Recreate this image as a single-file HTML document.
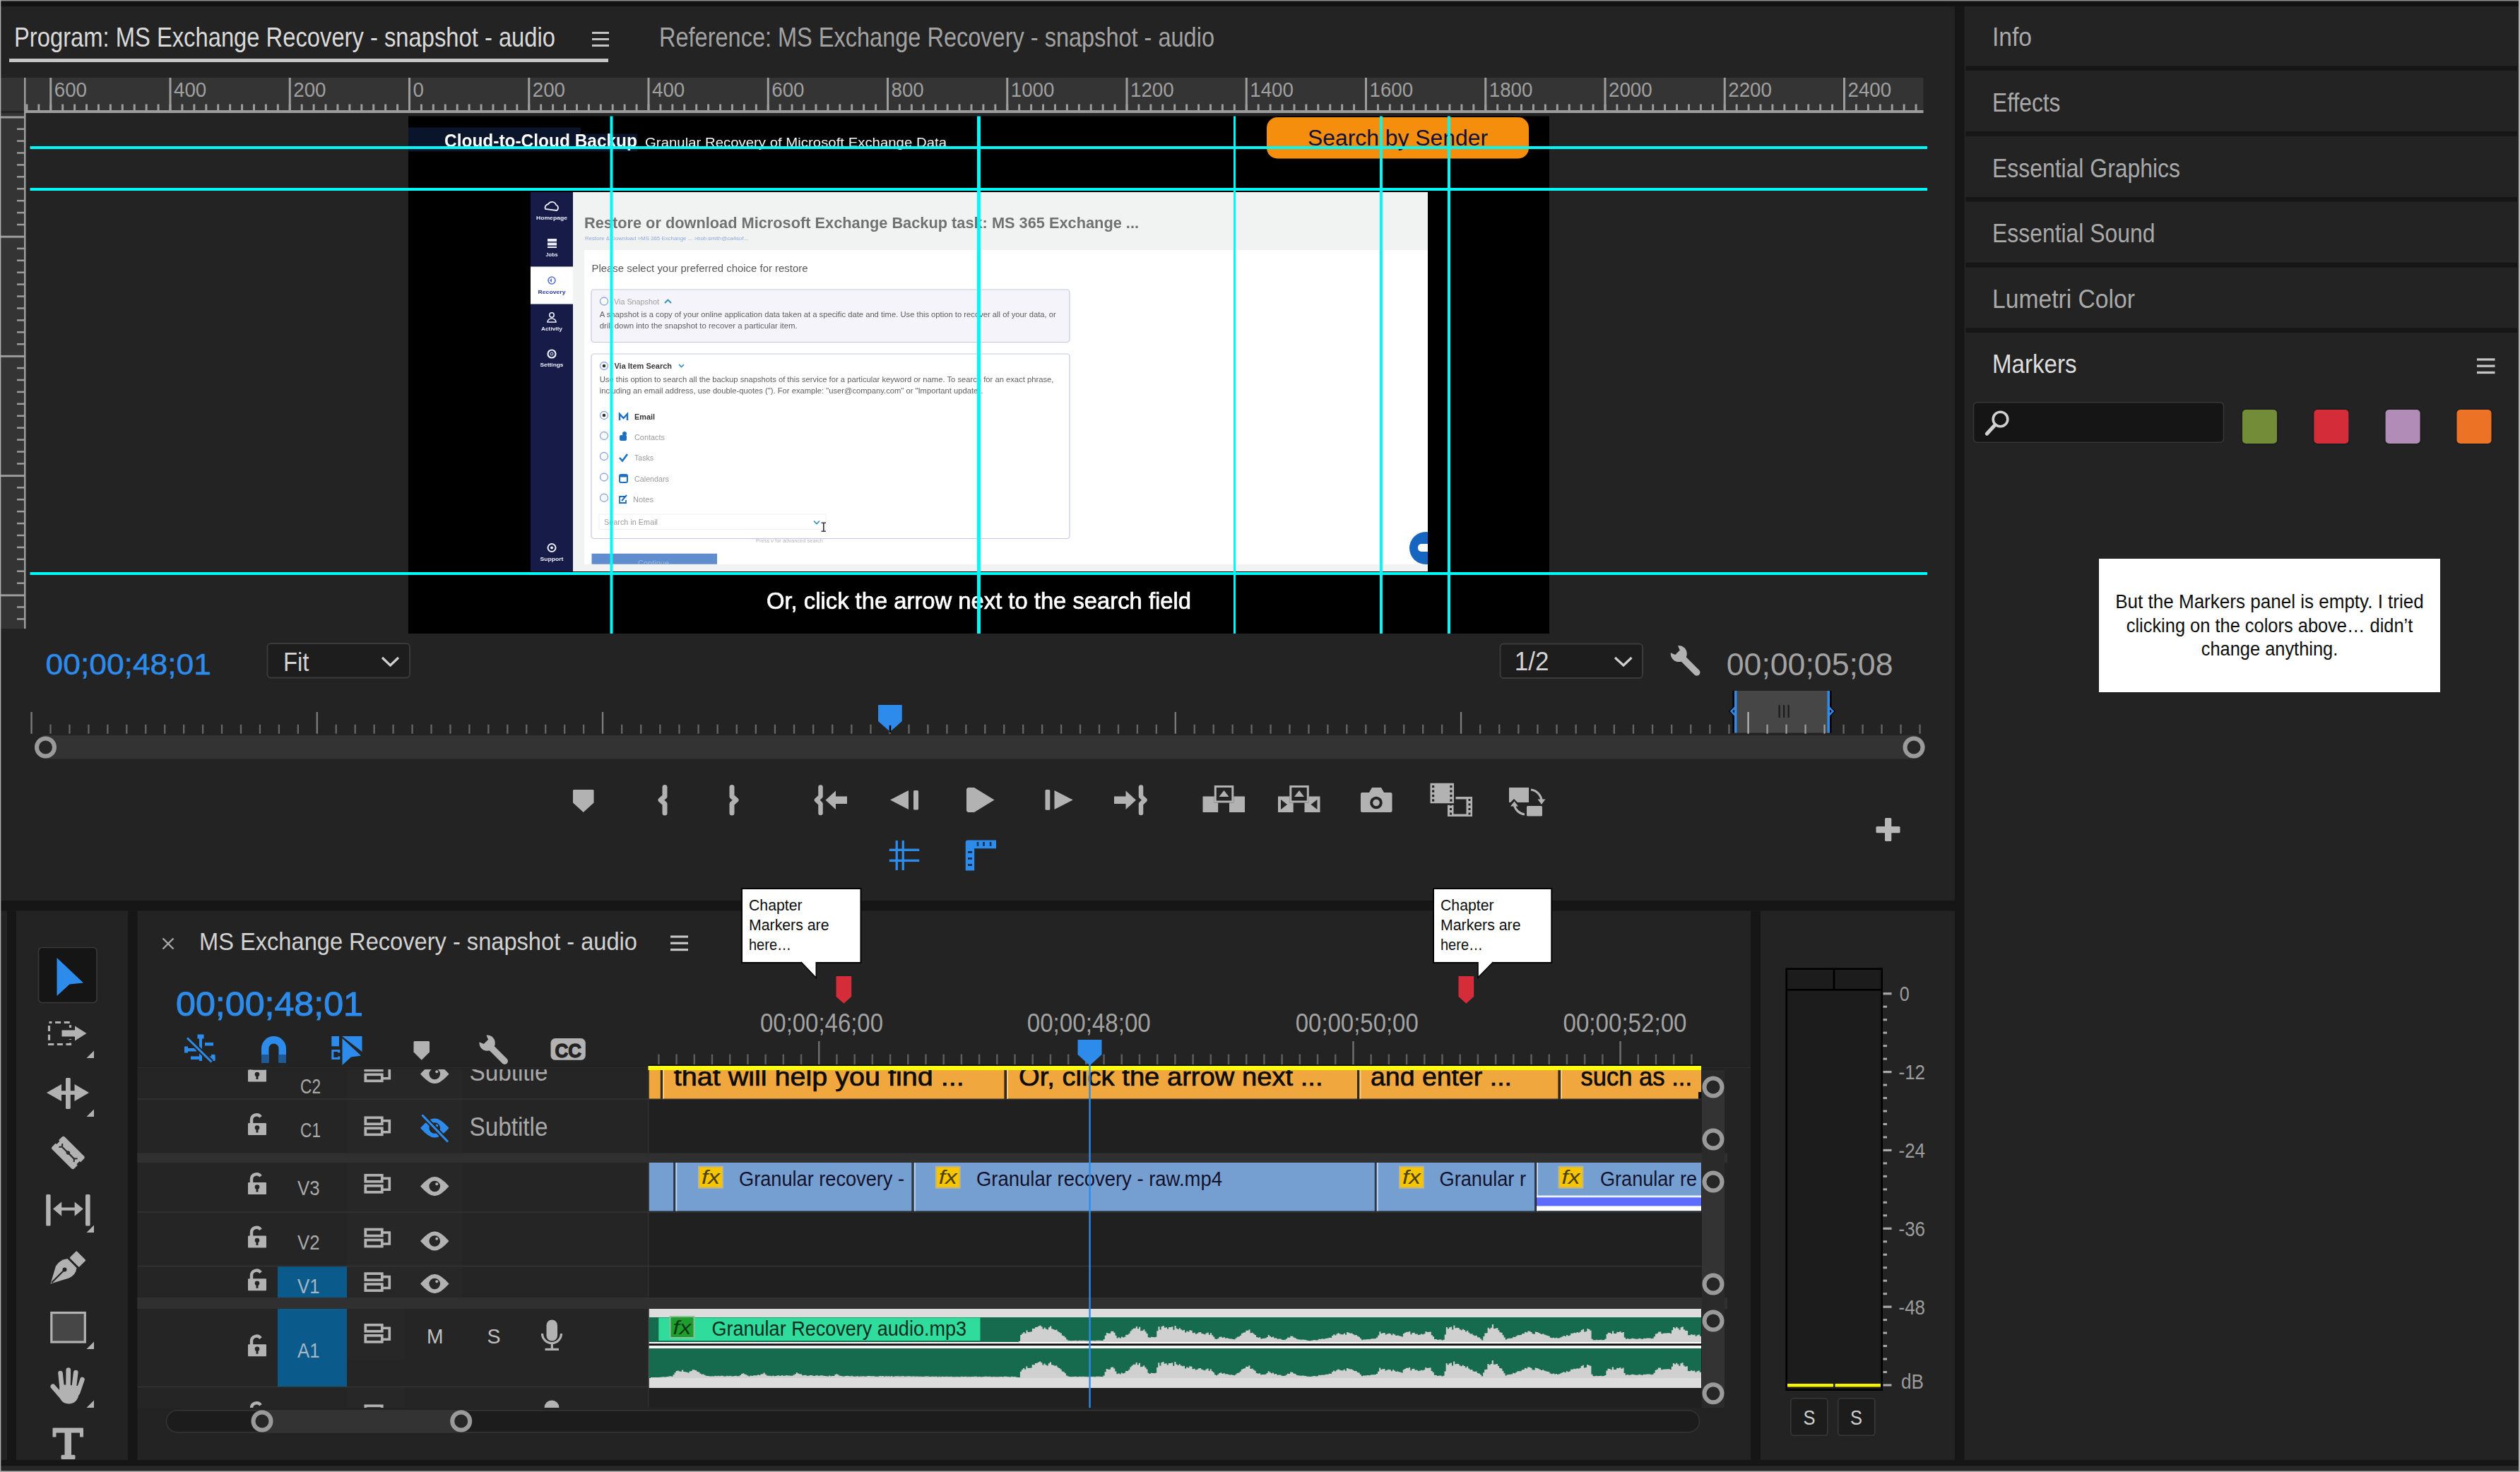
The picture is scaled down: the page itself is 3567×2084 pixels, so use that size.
<!DOCTYPE html>
<html lang="en"><head><meta charset="utf-8"><title>Adobe Premiere Pro - Program monitor, timeline and Markers panel</title>
<style>
html,body{margin:0;padding:0;background:#232323;overflow:hidden}
body{width:3567px;height:2084px;font-family:"Liberation Sans",sans-serif}
svg{display:block;position:absolute;left:0;top:0}
svg text{font-family:"Liberation Sans",sans-serif;white-space:pre}
</style></head>
<body>
<main aria-label="Premiere Pro workspace">
<svg width="3567" height="2084" viewBox="0 0 3567 2084" shape-rendering="auto">
<rect x="0" y="0" width="3567" height="2084" fill="#232323" />
<rect x="0" y="0" width="3567" height="9" fill="#131313" />
<rect x="0" y="0" width="3567" height="1.5" fill="#8c8c8c" />
<text x="20" y="66" font-size="39" fill="#dadada" textLength="766" lengthAdjust="spacingAndGlyphs" >Program: MS Exchange Recovery - snapshot - audio</text>
<rect x="13" y="83" width="848" height="5" fill="#c6c6c6" />
<rect x="838" y="45" width="24" height="3" fill="#c4c4c4" />
<rect x="838" y="54" width="24" height="3" fill="#c4c4c4" />
<rect x="838" y="63" width="24" height="3" fill="#c4c4c4" />
<text x="933" y="66" font-size="39" fill="#a2a2a2" textLength="786" lengthAdjust="spacingAndGlyphs" >Reference: MS Exchange Recovery - snapshot - audio</text>
<rect x="1" y="110" width="2721.5" height="47" fill="#343434" />
<rect x="36.4" y="147.5" width="3" height="9" fill="#9c9c9c" />
<rect x="53.325" y="147.5" width="3" height="9" fill="#9c9c9c" />
<rect x="70.25" y="147.5" width="3" height="9" fill="#9c9c9c" />
<rect x="87.175" y="147.5" width="3" height="9" fill="#9c9c9c" />
<rect x="104.1" y="147.5" width="3" height="9" fill="#9c9c9c" />
<rect x="121.025" y="147.5" width="3" height="9" fill="#9c9c9c" />
<rect x="137.95" y="147.5" width="3" height="9" fill="#9c9c9c" />
<rect x="154.875" y="147.5" width="3" height="9" fill="#9c9c9c" />
<rect x="171.8" y="147.5" width="3" height="9" fill="#9c9c9c" />
<rect x="188.725" y="147.5" width="3" height="9" fill="#9c9c9c" />
<rect x="205.65" y="147.5" width="3" height="9" fill="#9c9c9c" />
<rect x="222.575" y="147.5" width="3" height="9" fill="#9c9c9c" />
<rect x="239.5" y="147.5" width="3" height="9" fill="#9c9c9c" />
<rect x="256.425" y="147.5" width="3" height="9" fill="#9c9c9c" />
<rect x="273.35" y="147.5" width="3" height="9" fill="#9c9c9c" />
<rect x="290.275" y="147.5" width="3" height="9" fill="#9c9c9c" />
<rect x="307.2" y="147.5" width="3" height="9" fill="#9c9c9c" />
<rect x="324.125" y="147.5" width="3" height="9" fill="#9c9c9c" />
<rect x="341.05" y="147.5" width="3" height="9" fill="#9c9c9c" />
<rect x="357.975" y="147.5" width="3" height="9" fill="#9c9c9c" />
<rect x="374.9" y="147.5" width="3" height="9" fill="#9c9c9c" />
<rect x="391.825" y="147.5" width="3" height="9" fill="#9c9c9c" />
<rect x="408.75" y="147.5" width="3" height="9" fill="#9c9c9c" />
<rect x="425.675" y="147.5" width="3" height="9" fill="#9c9c9c" />
<rect x="442.6" y="147.5" width="3" height="9" fill="#9c9c9c" />
<rect x="459.525" y="147.5" width="3" height="9" fill="#9c9c9c" />
<rect x="476.45" y="147.5" width="3" height="9" fill="#9c9c9c" />
<rect x="493.375" y="147.5" width="3" height="9" fill="#9c9c9c" />
<rect x="510.3" y="147.5" width="3" height="9" fill="#9c9c9c" />
<rect x="527.225" y="147.5" width="3" height="9" fill="#9c9c9c" />
<rect x="544.15" y="147.5" width="3" height="9" fill="#9c9c9c" />
<rect x="561.075" y="147.5" width="3" height="9" fill="#9c9c9c" />
<rect x="578" y="147.5" width="3" height="9" fill="#9c9c9c" />
<rect x="594.925" y="147.5" width="3" height="9" fill="#9c9c9c" />
<rect x="611.85" y="147.5" width="3" height="9" fill="#9c9c9c" />
<rect x="628.775" y="147.5" width="3" height="9" fill="#9c9c9c" />
<rect x="645.7" y="147.5" width="3" height="9" fill="#9c9c9c" />
<rect x="662.625" y="147.5" width="3" height="9" fill="#9c9c9c" />
<rect x="679.55" y="147.5" width="3" height="9" fill="#9c9c9c" />
<rect x="696.475" y="147.5" width="3" height="9" fill="#9c9c9c" />
<rect x="713.4" y="147.5" width="3" height="9" fill="#9c9c9c" />
<rect x="730.325" y="147.5" width="3" height="9" fill="#9c9c9c" />
<rect x="747.25" y="147.5" width="3" height="9" fill="#9c9c9c" />
<rect x="764.175" y="147.5" width="3" height="9" fill="#9c9c9c" />
<rect x="781.1" y="147.5" width="3" height="9" fill="#9c9c9c" />
<rect x="798.025" y="147.5" width="3" height="9" fill="#9c9c9c" />
<rect x="814.95" y="147.5" width="3" height="9" fill="#9c9c9c" />
<rect x="831.875" y="147.5" width="3" height="9" fill="#9c9c9c" />
<rect x="848.8" y="147.5" width="3" height="9" fill="#9c9c9c" />
<rect x="865.725" y="147.5" width="3" height="9" fill="#9c9c9c" />
<rect x="882.65" y="147.5" width="3" height="9" fill="#9c9c9c" />
<rect x="899.575" y="147.5" width="3" height="9" fill="#9c9c9c" />
<rect x="916.5" y="147.5" width="3" height="9" fill="#9c9c9c" />
<rect x="933.425" y="147.5" width="3" height="9" fill="#9c9c9c" />
<rect x="950.35" y="147.5" width="3" height="9" fill="#9c9c9c" />
<rect x="967.275" y="147.5" width="3" height="9" fill="#9c9c9c" />
<rect x="984.2" y="147.5" width="3" height="9" fill="#9c9c9c" />
<rect x="1001.12" y="147.5" width="3" height="9" fill="#9c9c9c" />
<rect x="1018.05" y="147.5" width="3" height="9" fill="#9c9c9c" />
<rect x="1034.97" y="147.5" width="3" height="9" fill="#9c9c9c" />
<rect x="1051.9" y="147.5" width="3" height="9" fill="#9c9c9c" />
<rect x="1068.82" y="147.5" width="3" height="9" fill="#9c9c9c" />
<rect x="1085.75" y="147.5" width="3" height="9" fill="#9c9c9c" />
<rect x="1102.67" y="147.5" width="3" height="9" fill="#9c9c9c" />
<rect x="1119.6" y="147.5" width="3" height="9" fill="#9c9c9c" />
<rect x="1136.52" y="147.5" width="3" height="9" fill="#9c9c9c" />
<rect x="1153.45" y="147.5" width="3" height="9" fill="#9c9c9c" />
<rect x="1170.37" y="147.5" width="3" height="9" fill="#9c9c9c" />
<rect x="1187.3" y="147.5" width="3" height="9" fill="#9c9c9c" />
<rect x="1204.22" y="147.5" width="3" height="9" fill="#9c9c9c" />
<rect x="1221.15" y="147.5" width="3" height="9" fill="#9c9c9c" />
<rect x="1238.07" y="147.5" width="3" height="9" fill="#9c9c9c" />
<rect x="1255" y="147.5" width="3" height="9" fill="#9c9c9c" />
<rect x="1271.92" y="147.5" width="3" height="9" fill="#9c9c9c" />
<rect x="1288.85" y="147.5" width="3" height="9" fill="#9c9c9c" />
<rect x="1305.77" y="147.5" width="3" height="9" fill="#9c9c9c" />
<rect x="1322.7" y="147.5" width="3" height="9" fill="#9c9c9c" />
<rect x="1339.62" y="147.5" width="3" height="9" fill="#9c9c9c" />
<rect x="1356.55" y="147.5" width="3" height="9" fill="#9c9c9c" />
<rect x="1373.47" y="147.5" width="3" height="9" fill="#9c9c9c" />
<rect x="1390.4" y="147.5" width="3" height="9" fill="#9c9c9c" />
<rect x="1407.32" y="147.5" width="3" height="9" fill="#9c9c9c" />
<rect x="1424.25" y="147.5" width="3" height="9" fill="#9c9c9c" />
<rect x="1441.17" y="147.5" width="3" height="9" fill="#9c9c9c" />
<rect x="1458.1" y="147.5" width="3" height="9" fill="#9c9c9c" />
<rect x="1475.02" y="147.5" width="3" height="9" fill="#9c9c9c" />
<rect x="1491.95" y="147.5" width="3" height="9" fill="#9c9c9c" />
<rect x="1508.87" y="147.5" width="3" height="9" fill="#9c9c9c" />
<rect x="1525.8" y="147.5" width="3" height="9" fill="#9c9c9c" />
<rect x="1542.72" y="147.5" width="3" height="9" fill="#9c9c9c" />
<rect x="1559.65" y="147.5" width="3" height="9" fill="#9c9c9c" />
<rect x="1576.57" y="147.5" width="3" height="9" fill="#9c9c9c" />
<rect x="1593.5" y="147.5" width="3" height="9" fill="#9c9c9c" />
<rect x="1610.42" y="147.5" width="3" height="9" fill="#9c9c9c" />
<rect x="1627.35" y="147.5" width="3" height="9" fill="#9c9c9c" />
<rect x="1644.27" y="147.5" width="3" height="9" fill="#9c9c9c" />
<rect x="1661.2" y="147.5" width="3" height="9" fill="#9c9c9c" />
<rect x="1678.12" y="147.5" width="3" height="9" fill="#9c9c9c" />
<rect x="1695.05" y="147.5" width="3" height="9" fill="#9c9c9c" />
<rect x="1711.97" y="147.5" width="3" height="9" fill="#9c9c9c" />
<rect x="1728.9" y="147.5" width="3" height="9" fill="#9c9c9c" />
<rect x="1745.82" y="147.5" width="3" height="9" fill="#9c9c9c" />
<rect x="1762.75" y="147.5" width="3" height="9" fill="#9c9c9c" />
<rect x="1779.67" y="147.5" width="3" height="9" fill="#9c9c9c" />
<rect x="1796.6" y="147.5" width="3" height="9" fill="#9c9c9c" />
<rect x="1813.52" y="147.5" width="3" height="9" fill="#9c9c9c" />
<rect x="1830.45" y="147.5" width="3" height="9" fill="#9c9c9c" />
<rect x="1847.37" y="147.5" width="3" height="9" fill="#9c9c9c" />
<rect x="1864.3" y="147.5" width="3" height="9" fill="#9c9c9c" />
<rect x="1881.22" y="147.5" width="3" height="9" fill="#9c9c9c" />
<rect x="1898.15" y="147.5" width="3" height="9" fill="#9c9c9c" />
<rect x="1915.07" y="147.5" width="3" height="9" fill="#9c9c9c" />
<rect x="1932" y="147.5" width="3" height="9" fill="#9c9c9c" />
<rect x="1948.92" y="147.5" width="3" height="9" fill="#9c9c9c" />
<rect x="1965.85" y="147.5" width="3" height="9" fill="#9c9c9c" />
<rect x="1982.77" y="147.5" width="3" height="9" fill="#9c9c9c" />
<rect x="1999.7" y="147.5" width="3" height="9" fill="#9c9c9c" />
<rect x="2016.62" y="147.5" width="3" height="9" fill="#9c9c9c" />
<rect x="2033.55" y="147.5" width="3" height="9" fill="#9c9c9c" />
<rect x="2050.47" y="147.5" width="3" height="9" fill="#9c9c9c" />
<rect x="2067.4" y="147.5" width="3" height="9" fill="#9c9c9c" />
<rect x="2084.32" y="147.5" width="3" height="9" fill="#9c9c9c" />
<rect x="2101.25" y="147.5" width="3" height="9" fill="#9c9c9c" />
<rect x="2118.17" y="147.5" width="3" height="9" fill="#9c9c9c" />
<rect x="2135.1" y="147.5" width="3" height="9" fill="#9c9c9c" />
<rect x="2152.02" y="147.5" width="3" height="9" fill="#9c9c9c" />
<rect x="2168.95" y="147.5" width="3" height="9" fill="#9c9c9c" />
<rect x="2185.87" y="147.5" width="3" height="9" fill="#9c9c9c" />
<rect x="2202.8" y="147.5" width="3" height="9" fill="#9c9c9c" />
<rect x="2219.72" y="147.5" width="3" height="9" fill="#9c9c9c" />
<rect x="2236.65" y="147.5" width="3" height="9" fill="#9c9c9c" />
<rect x="2253.57" y="147.5" width="3" height="9" fill="#9c9c9c" />
<rect x="2270.5" y="147.5" width="3" height="9" fill="#9c9c9c" />
<rect x="2287.42" y="147.5" width="3" height="9" fill="#9c9c9c" />
<rect x="2304.35" y="147.5" width="3" height="9" fill="#9c9c9c" />
<rect x="2321.27" y="147.5" width="3" height="9" fill="#9c9c9c" />
<rect x="2338.2" y="147.5" width="3" height="9" fill="#9c9c9c" />
<rect x="2355.12" y="147.5" width="3" height="9" fill="#9c9c9c" />
<rect x="2372.05" y="147.5" width="3" height="9" fill="#9c9c9c" />
<rect x="2388.97" y="147.5" width="3" height="9" fill="#9c9c9c" />
<rect x="2405.9" y="147.5" width="3" height="9" fill="#9c9c9c" />
<rect x="2422.83" y="147.5" width="3" height="9" fill="#9c9c9c" />
<rect x="2439.75" y="147.5" width="3" height="9" fill="#9c9c9c" />
<rect x="2456.68" y="147.5" width="3" height="9" fill="#9c9c9c" />
<rect x="2473.6" y="147.5" width="3" height="9" fill="#9c9c9c" />
<rect x="2490.53" y="147.5" width="3" height="9" fill="#9c9c9c" />
<rect x="2507.45" y="147.5" width="3" height="9" fill="#9c9c9c" />
<rect x="2524.38" y="147.5" width="3" height="9" fill="#9c9c9c" />
<rect x="2541.3" y="147.5" width="3" height="9" fill="#9c9c9c" />
<rect x="2558.23" y="147.5" width="3" height="9" fill="#9c9c9c" />
<rect x="2575.15" y="147.5" width="3" height="9" fill="#9c9c9c" />
<rect x="2592.08" y="147.5" width="3" height="9" fill="#9c9c9c" />
<rect x="2609" y="147.5" width="3" height="9" fill="#9c9c9c" />
<rect x="2625.93" y="147.5" width="3" height="9" fill="#9c9c9c" />
<rect x="2642.85" y="147.5" width="3" height="9" fill="#9c9c9c" />
<rect x="2659.78" y="147.5" width="3" height="9" fill="#9c9c9c" />
<rect x="2676.7" y="147.5" width="3" height="9" fill="#9c9c9c" />
<rect x="2693.63" y="147.5" width="3" height="9" fill="#9c9c9c" />
<rect x="2710.55" y="147.5" width="3" height="9" fill="#9c9c9c" />
<rect x="70.25" y="110" width="3" height="47" fill="#9c9c9c" />
<text x="76.75" y="136.5" font-size="29" fill="#a0a0a0" textLength="46.2" lengthAdjust="spacingAndGlyphs" >600</text>
<rect x="239.5" y="110" width="3" height="47" fill="#9c9c9c" />
<text x="246" y="136.5" font-size="29" fill="#a0a0a0" textLength="46.2" lengthAdjust="spacingAndGlyphs" >400</text>
<rect x="408.75" y="110" width="3" height="47" fill="#9c9c9c" />
<text x="415.25" y="136.5" font-size="29" fill="#a0a0a0" textLength="46.2" lengthAdjust="spacingAndGlyphs" >200</text>
<rect x="578" y="110" width="3" height="47" fill="#9c9c9c" />
<text x="584.5" y="136.5" font-size="29" fill="#a0a0a0" textLength="15.4" lengthAdjust="spacingAndGlyphs" >0</text>
<rect x="747.25" y="110" width="3" height="47" fill="#9c9c9c" />
<text x="753.75" y="136.5" font-size="29" fill="#a0a0a0" textLength="46.2" lengthAdjust="spacingAndGlyphs" >200</text>
<rect x="916.5" y="110" width="3" height="47" fill="#9c9c9c" />
<text x="923" y="136.5" font-size="29" fill="#a0a0a0" textLength="46.2" lengthAdjust="spacingAndGlyphs" >400</text>
<rect x="1085.75" y="110" width="3" height="47" fill="#9c9c9c" />
<text x="1092.25" y="136.5" font-size="29" fill="#a0a0a0" textLength="46.2" lengthAdjust="spacingAndGlyphs" >600</text>
<rect x="1255" y="110" width="3" height="47" fill="#9c9c9c" />
<text x="1261.5" y="136.5" font-size="29" fill="#a0a0a0" textLength="46.2" lengthAdjust="spacingAndGlyphs" >800</text>
<rect x="1424.25" y="110" width="3" height="47" fill="#9c9c9c" />
<text x="1430.75" y="136.5" font-size="29" fill="#a0a0a0" textLength="61.6" lengthAdjust="spacingAndGlyphs" >1000</text>
<rect x="1593.5" y="110" width="3" height="47" fill="#9c9c9c" />
<text x="1600" y="136.5" font-size="29" fill="#a0a0a0" textLength="61.6" lengthAdjust="spacingAndGlyphs" >1200</text>
<rect x="1762.75" y="110" width="3" height="47" fill="#9c9c9c" />
<text x="1769.25" y="136.5" font-size="29" fill="#a0a0a0" textLength="61.6" lengthAdjust="spacingAndGlyphs" >1400</text>
<rect x="1932" y="110" width="3" height="47" fill="#9c9c9c" />
<text x="1938.5" y="136.5" font-size="29" fill="#a0a0a0" textLength="61.6" lengthAdjust="spacingAndGlyphs" >1600</text>
<rect x="2101.25" y="110" width="3" height="47" fill="#9c9c9c" />
<text x="2107.75" y="136.5" font-size="29" fill="#a0a0a0" textLength="61.6" lengthAdjust="spacingAndGlyphs" >1800</text>
<rect x="2270.5" y="110" width="3" height="47" fill="#9c9c9c" />
<text x="2277" y="136.5" font-size="29" fill="#a0a0a0" textLength="61.6" lengthAdjust="spacingAndGlyphs" >2000</text>
<rect x="2439.75" y="110" width="3" height="47" fill="#9c9c9c" />
<text x="2446.25" y="136.5" font-size="29" fill="#a0a0a0" textLength="61.6" lengthAdjust="spacingAndGlyphs" >2200</text>
<rect x="2609" y="110" width="3" height="47" fill="#9c9c9c" />
<text x="2615.5" y="136.5" font-size="29" fill="#a0a0a0" textLength="61.6" lengthAdjust="spacingAndGlyphs" >2400</text>
<rect x="35" y="156" width="2687.5" height="4" fill="#9c9c9c" />
<rect x="34" y="110" width="2.5" height="780" fill="#9c9c9c" />
<rect x="1" y="160" width="33" height="730" fill="#343434" />
<rect x="1" y="164.5" width="34" height="3" fill="#9c9c9c" />
<rect x="24" y="181.42" width="10" height="2.5" fill="#9c9c9c" />
<rect x="24" y="198.34" width="10" height="2.5" fill="#9c9c9c" />
<rect x="24" y="215.26" width="10" height="2.5" fill="#9c9c9c" />
<rect x="24" y="232.18" width="10" height="2.5" fill="#9c9c9c" />
<rect x="24" y="249.1" width="10" height="2.5" fill="#9c9c9c" />
<rect x="24" y="266.02" width="10" height="2.5" fill="#9c9c9c" />
<rect x="24" y="282.94" width="10" height="2.5" fill="#9c9c9c" />
<rect x="24" y="299.86" width="10" height="2.5" fill="#9c9c9c" />
<rect x="24" y="316.78" width="10" height="2.5" fill="#9c9c9c" />
<rect x="1" y="333.7" width="34" height="3" fill="#9c9c9c" />
<rect x="24" y="350.62" width="10" height="2.5" fill="#9c9c9c" />
<rect x="24" y="367.54" width="10" height="2.5" fill="#9c9c9c" />
<rect x="24" y="384.46" width="10" height="2.5" fill="#9c9c9c" />
<rect x="24" y="401.38" width="10" height="2.5" fill="#9c9c9c" />
<rect x="24" y="418.3" width="10" height="2.5" fill="#9c9c9c" />
<rect x="24" y="435.22" width="10" height="2.5" fill="#9c9c9c" />
<rect x="24" y="452.14" width="10" height="2.5" fill="#9c9c9c" />
<rect x="24" y="469.06" width="10" height="2.5" fill="#9c9c9c" />
<rect x="24" y="485.98" width="10" height="2.5" fill="#9c9c9c" />
<rect x="1" y="502.9" width="34" height="3" fill="#9c9c9c" />
<rect x="24" y="519.82" width="10" height="2.5" fill="#9c9c9c" />
<rect x="24" y="536.74" width="10" height="2.5" fill="#9c9c9c" />
<rect x="24" y="553.66" width="10" height="2.5" fill="#9c9c9c" />
<rect x="24" y="570.58" width="10" height="2.5" fill="#9c9c9c" />
<rect x="24" y="587.5" width="10" height="2.5" fill="#9c9c9c" />
<rect x="24" y="604.42" width="10" height="2.5" fill="#9c9c9c" />
<rect x="24" y="621.34" width="10" height="2.5" fill="#9c9c9c" />
<rect x="24" y="638.26" width="10" height="2.5" fill="#9c9c9c" />
<rect x="24" y="655.18" width="10" height="2.5" fill="#9c9c9c" />
<rect x="1" y="672.1" width="34" height="3" fill="#9c9c9c" />
<rect x="24" y="689.02" width="10" height="2.5" fill="#9c9c9c" />
<rect x="24" y="705.94" width="10" height="2.5" fill="#9c9c9c" />
<rect x="24" y="722.86" width="10" height="2.5" fill="#9c9c9c" />
<rect x="24" y="739.78" width="10" height="2.5" fill="#9c9c9c" />
<rect x="24" y="756.7" width="10" height="2.5" fill="#9c9c9c" />
<rect x="24" y="773.62" width="10" height="2.5" fill="#9c9c9c" />
<rect x="24" y="790.54" width="10" height="2.5" fill="#9c9c9c" />
<rect x="24" y="807.46" width="10" height="2.5" fill="#9c9c9c" />
<rect x="24" y="824.38" width="10" height="2.5" fill="#9c9c9c" />
<rect x="1" y="841.3" width="34" height="3" fill="#9c9c9c" />
<rect x="24" y="858.22" width="10" height="2.5" fill="#9c9c9c" />
<rect x="24" y="875.14" width="10" height="2.5" fill="#9c9c9c" />
<rect x="578" y="164.5" width="1615" height="732.5" fill="#000" />
<rect x="578" y="180.5" width="244" height="34" fill="#0a142b" />
<rect x="822" y="189.5" width="80" height="25" fill="#0a142b" />
<text x="629" y="207.5" font-size="25" fill="#fff" textLength="273" lengthAdjust="spacingAndGlyphs" font-weight="bold" filter="url(#bl)">Cloud-to-Cloud Backup</text>
<text x="913" y="207.5" font-size="19" fill="#f4f4f4" textLength="427" lengthAdjust="spacingAndGlyphs" filter="url(#bl)">Granular Recovery of Microsoft Exchange Data</text>
<rect x="1793" y="166" width="371" height="58.5" fill="#f58d0d" rx="15" />
<text x="1851" y="205.5" font-size="31" fill="#10103c" textLength="255" lengthAdjust="spacingAndGlyphs" >Search by Sender</text>
<filter id="bl" x="-2%" y="-2%" width="104%" height="104%"><feGaussianBlur stdDeviation="0.55"/></filter>
<clipPath id="cpv"><rect x="751" y="272" width="1270" height="537"/></clipPath>
<clipPath id="cpw"><rect x="827" y="354" width="1194" height="444.7"/></clipPath>
<g clip-path="url(#cpv)">
<g filter="url(#bl)">
<rect x="811" y="272" width="1210" height="537" fill="#f1f3f3" />
<rect x="827" y="354" width="1194" height="445" fill="#ffffff" />
<rect x="751" y="272" width="60" height="537" fill="#121a46" />
<rect x="751" y="377.5" width="60" height="53" fill="#ffffff" />
<path d="M772 296 a5 5 0 0 1 4 -7 a6 6 0 0 1 11 1 a4.5 4.5 0 0 1 1 8 z" fill="none" stroke="#eef0ff" stroke-width="1.8" />
<text x="781" y="311" font-size="8" fill="#eef0ff" textLength="44" lengthAdjust="spacingAndGlyphs" font-weight="bold" text-anchor="middle" >Homepage</text>
<rect x="775" y="338" width="13" height="4" fill="#eef0ff" />
<rect x="775" y="343.5" width="13" height="4" fill="#eef0ff" />
<rect x="775" y="349" width="13" height="2" fill="#eef0ff" />
<text x="781" y="363" font-size="8" fill="#eef0ff" textLength="17" lengthAdjust="spacingAndGlyphs" font-weight="bold" text-anchor="middle" >Jobs</text>
<circle cx="781" cy="397" r="5" fill="none" stroke="#5a6fd0" stroke-width="1.6" />
<path d="M778 397 l3 -3 v6 z" fill="#5a6fd0" />
<text x="781" y="416" font-size="8" fill="#2b3a9a" textLength="39" lengthAdjust="spacingAndGlyphs" font-weight="bold" text-anchor="middle" >Recovery</text>
<circle cx="781" cy="446" r="3.2" fill="none" stroke="#eef0ff" stroke-width="1.6" />
<path d="M775 456 a6 5 0 0 1 12 0 z" fill="none" stroke="#eef0ff" stroke-width="1.6" />
<text x="781" y="468" font-size="8" fill="#eef0ff" textLength="30" lengthAdjust="spacingAndGlyphs" font-weight="bold" text-anchor="middle" >Activity</text>
<circle cx="781" cy="501" r="5.5" fill="none" stroke="#eef0ff" stroke-width="2.2" />
<circle cx="781" cy="501" r="2" fill="none" stroke="#eef0ff" stroke-width="1" />
<text x="781" y="519" font-size="8" fill="#eef0ff" textLength="33" lengthAdjust="spacingAndGlyphs" font-weight="bold" text-anchor="middle" >Settings</text>
<circle cx="781" cy="775.5" r="5.5" fill="none" stroke="#eef0ff" stroke-width="2" />
<circle cx="781" cy="775.5" r="2" fill="#eef0ff" />
<text x="781" y="794" font-size="8" fill="#eef0ff" textLength="33" lengthAdjust="spacingAndGlyphs" font-weight="bold" text-anchor="middle" >Support</text>
<text x="827" y="323" font-size="22" fill="#717171" textLength="785" lengthAdjust="spacingAndGlyphs" font-weight="bold" >Restore or download Microsoft Exchange Backup task: MS 365 Exchange ...</text>
<text x="828" y="340" font-size="7" fill="#8fa9dc" textLength="231" lengthAdjust="spacingAndGlyphs" >Restore &amp; Download &gt;MS 365 Exchange ... &gt;bob.smith@ca4sof...</text>
<text x="837.5" y="385" font-size="15" fill="#5a5a5a" textLength="306" lengthAdjust="spacingAndGlyphs" >Please select your preferred choice for restore</text>
<rect x="837" y="410" width="677" height="74.5" fill="#f4f4fa" rx="4" stroke="#c3c7e6" stroke-width="1.2" />
<circle cx="855" cy="426.5" r="5.5" fill="#fff" stroke="#86a8dc" stroke-width="1.3" />
<text x="869" y="430.5" font-size="11.5" fill="#9d9d9d" textLength="64" lengthAdjust="spacingAndGlyphs" >Via Snapshot</text>
<polyline points="941,429 945.5,424.5 950,429" fill="none" stroke="#2f8fb8" stroke-width="1.8" stroke-linecap="butt" stroke-linejoin="miter"/>
<text x="848.75" y="448.5" font-size="10.5" fill="#5e5e5e" textLength="646" lengthAdjust="spacingAndGlyphs" >A snapshot is a copy of your online application data taken at a specific date and time. Use this option to recover all of your data, or</text>
<text x="848.75" y="465" font-size="10.5" fill="#5e5e5e" textLength="280" lengthAdjust="spacingAndGlyphs" >drill down into the snapshot to recover a particular item.</text>
<rect x="837" y="501" width="677" height="261.5" fill="#ffffff" rx="4" stroke="#c3c7e6" stroke-width="1.2" />
<circle cx="855" cy="518" r="5.5" fill="#fff" stroke="#86a8dc" stroke-width="1.3" />
<circle cx="855" cy="518" r="2.3" fill="#333" />
<text x="869.5" y="522" font-size="11.5" fill="#3a3a3a" textLength="81.5" lengthAdjust="spacingAndGlyphs" font-weight="bold" >Via Item Search</text>
<polyline points="961,516 964.5,519.5 968,516" fill="none" stroke="#2f8fb8" stroke-width="1.6" stroke-linecap="butt" stroke-linejoin="miter"/>
<text x="848.75" y="541" font-size="10.5" fill="#5e5e5e" textLength="642.6" lengthAdjust="spacingAndGlyphs" >Use this option to search all the backup snapshots of this service for a particular keyword or name. To search for an exact phrase,</text>
<text x="848.75" y="557" font-size="10.5" fill="#5e5e5e" textLength="542.6" lengthAdjust="spacingAndGlyphs" >including an email address, use double-quotes (&quot;). For example: &quot;user@company.com&quot; or &quot;Important update&quot;.</text>
<circle cx="855" cy="588" r="5.5" fill="#fff" stroke="#86a8dc" stroke-width="1.3" />
<circle cx="855" cy="588" r="2.3" fill="#333" />
<circle cx="855" cy="617" r="5.5" fill="#fff" stroke="#86a8dc" stroke-width="1.3" />
<circle cx="855" cy="646" r="5.5" fill="#fff" stroke="#86a8dc" stroke-width="1.3" />
<circle cx="855" cy="675.5" r="5.5" fill="#fff" stroke="#86a8dc" stroke-width="1.3" />
<circle cx="855" cy="704.75" r="5.5" fill="#fff" stroke="#86a8dc" stroke-width="1.3" />
<polyline points="877,595 877,586 882.5,592 888,586 888,595" fill="none" stroke="#1d6fc4" stroke-width="2.4" stroke-linecap="butt" stroke-linejoin="miter"/>
<text x="898" y="594" font-size="10.5" fill="#333" textLength="29" lengthAdjust="spacingAndGlyphs" font-weight="bold" >Email</text>
<rect x="877" y="616" width="10" height="8" fill="#1d6fc4" rx="2" />
<circle cx="884" cy="614" r="3" fill="#1d6fc4" />
<text x="898" y="623" font-size="10.5" fill="#9a9a9a" textLength="43" lengthAdjust="spacingAndGlyphs" >Contacts</text>
<polyline points="877,648 881,652.5 888,643" fill="none" stroke="#1d6fc4" stroke-width="2.6" stroke-linecap="butt" stroke-linejoin="miter"/>
<text x="898" y="652" font-size="10.5" fill="#9a9a9a" textLength="27" lengthAdjust="spacingAndGlyphs" >Tasks</text>
<rect x="877" y="672" width="11" height="11" fill="none" rx="2" stroke="#1d6fc4" stroke-width="2" />
<rect x="877" y="672" width="11" height="3.5" fill="#1d6fc4" />
<text x="898" y="681.5" font-size="10.5" fill="#9a9a9a" textLength="49" lengthAdjust="spacingAndGlyphs" >Calendars</text>
<polyline points="885,703 877,703 877,712 886,712 886,708" fill="none" stroke="#1d6fc4" stroke-width="1.8" stroke-linecap="butt" stroke-linejoin="miter"/>
<line x1="880" y1="709" x2="887" y2="701" stroke="#1d6fc4" stroke-width="2" stroke-linecap="butt"/>
<text x="896" y="710.5" font-size="10.5" fill="#9a9a9a" textLength="29" lengthAdjust="spacingAndGlyphs" >Notes</text>
<rect x="848" y="728" width="321" height="21.5" fill="#fff" stroke="#efefef" stroke-width="1" />
<text x="855" y="743" font-size="10.5" fill="#9c9c9c" textLength="76" lengthAdjust="spacingAndGlyphs" >Search in Email</text>
<polyline points="1152,737.5 1156,741.5 1160,737.5" fill="none" stroke="#2f8fb8" stroke-width="1.6" stroke-linecap="butt" stroke-linejoin="miter"/>
<rect x="1165" y="740" width="1.6" height="12" fill="#333" />
<rect x="1162.5" y="739.5" width="6.5" height="1.4" fill="#333" />
<rect x="1162.5" y="751.5" width="6.5" height="1.4" fill="#333" />
<text x="1070" y="768" font-size="6.5" fill="#b5b5b5" textLength="95" lengthAdjust="spacingAndGlyphs" >Press v for advanced search</text>
<rect x="837.5" y="783.75" width="177.5" height="15" fill="#5f8dce" />
<text x="903" y="801" font-size="10" fill="#9dbbe6" textLength="44" lengthAdjust="spacingAndGlyphs" clip-path="url(#cpw)">Continue</text>
<circle cx="2018" cy="776" r="23" fill="#1565c0" />
<rect x="2007" y="770" width="20" height="11" fill="#fff" rx="5" />
</g>
</g>
<text x="1085" y="861.5" font-size="33" fill="#fff" textLength="601" lengthAdjust="spacingAndGlyphs" stroke="#fff" stroke-width="0.7" filter="url(#bl)">Or, click the arrow next to the search field</text>
<rect x="42.5" y="207" width="2685.5" height="4" fill="#00f8f8" />
<rect x="42.5" y="266" width="2685.5" height="4" fill="#00f8f8" />
<rect x="42.5" y="810" width="2685.5" height="4" fill="#00f8f8" />
<rect x="863.5" y="164.5" width="4" height="732.5" fill="#00f8f8" />
<rect x="1383" y="164.5" width="5" height="732.5" fill="#00f8f8" />
<rect x="1746" y="164.5" width="3" height="732.5" fill="#00f8f8" />
<rect x="1953" y="164.5" width="4" height="732.5" fill="#00f8f8" />
<rect x="2049" y="164.5" width="4" height="732.5" fill="#00f8f8" />
<text x="64.5" y="955" font-size="42.5" fill="#2d8ceb" textLength="234.5" lengthAdjust="spacingAndGlyphs" stroke="#2d8ceb" stroke-width="0.5">00;00;48;01</text>
<rect x="378.5" y="911" width="201.5" height="48.5" fill="#1d1d1d" rx="5" stroke="#3a3a3a" stroke-width="2" />
<text x="401" y="950" font-size="36" fill="#d4d4d4" textLength="36.5" lengthAdjust="spacingAndGlyphs" >Fit</text>
<polyline points="541,931 552.5,942 564,931" fill="none" stroke="#cfcfcf" stroke-width="3.2" stroke-linecap="butt" stroke-linejoin="miter"/>
<rect x="2123.5" y="911.5" width="201.5" height="48.5" fill="#1d1d1d" rx="5" stroke="#3a3a3a" stroke-width="2" />
<text x="2143.75" y="948.75" font-size="36" fill="#d4d4d4" textLength="48.75" lengthAdjust="spacingAndGlyphs" >1/2</text>
<polyline points="2286,931 2298,942 2309.5,931" fill="none" stroke="#cfcfcf" stroke-width="3.2" stroke-linecap="butt" stroke-linejoin="miter"/>
<g transform="translate(2363.75 913) scale(1)">
<line x1="16" y1="17" x2="38" y2="39" stroke="#b2b2b2" stroke-width="9.5" stroke-linecap="round"/>
<circle cx="12.5" cy="12.5" r="11.5" fill="#b2b2b2" />
<polygon points="0,-4 9,-4 14,7.5 7.5,14 -4,9 -4,0" fill="#232323" />
<circle cx="11.5" cy="11.5" r="0.1" fill="#232323" />
</g>
<text x="2443.75" y="955.5" font-size="43.5" fill="#a2a2a2" textLength="235.75" lengthAdjust="spacingAndGlyphs" >00;00;05;08</text>
<rect x="2455" y="978" width="135" height="59.5" fill="#464646" />
<rect x="2452.5" y="978" width="2.5" height="59.5" fill="#000" />
<rect x="2590" y="978" width="2.5" height="59.5" fill="#000" />
<polygon points="2455,999 2447,1007 2455,1015" fill="#000" />
<polygon points="2590,999 2598,1007 2590,1015" fill="#000" />
<rect x="2455" y="978" width="3.5" height="59.5" fill="#2d8ceb" />
<rect x="2586.5" y="978" width="3.5" height="59.5" fill="#2d8ceb" />
<polyline points="2456.5,1001 2450.5,1007 2456.5,1013" fill="none" stroke="#2d8ceb" stroke-width="2.5" stroke-linecap="butt" stroke-linejoin="miter"/>
<polyline points="2588.5,1001 2594.5,1007 2588.5,1013" fill="none" stroke="#2d8ceb" stroke-width="2.5" stroke-linecap="butt" stroke-linejoin="miter"/>
<rect x="2517.5" y="998" width="2.2" height="18" fill="#1c1c1c" />
<rect x="2524" y="998" width="2.2" height="18" fill="#1c1c1c" />
<rect x="2530.5" y="998" width="2.2" height="18" fill="#1c1c1c" />
<rect x="43.4" y="1008" width="2.3" height="30.75" fill="#7c7c7c" />
<rect x="70.35" y="1025.75" width="2.3" height="13" fill="#666666" />
<rect x="97.3" y="1025.75" width="2.3" height="13" fill="#666666" />
<rect x="124.25" y="1025.75" width="2.3" height="13" fill="#666666" />
<rect x="151.2" y="1025.75" width="2.3" height="13" fill="#666666" />
<rect x="178.15" y="1025.75" width="2.3" height="13" fill="#666666" />
<rect x="205.1" y="1025.75" width="2.3" height="13" fill="#666666" />
<rect x="232.05" y="1025.75" width="2.3" height="13" fill="#666666" />
<rect x="259" y="1025.75" width="2.3" height="13" fill="#666666" />
<rect x="285.95" y="1025.75" width="2.3" height="13" fill="#666666" />
<rect x="312.9" y="1025.75" width="2.3" height="13" fill="#666666" />
<rect x="339.85" y="1025.75" width="2.3" height="13" fill="#666666" />
<rect x="366.8" y="1025.75" width="2.3" height="13" fill="#666666" />
<rect x="393.75" y="1025.75" width="2.3" height="13" fill="#666666" />
<rect x="420.7" y="1025.75" width="2.3" height="13" fill="#666666" />
<rect x="447.65" y="1008" width="2.3" height="30.75" fill="#7c7c7c" />
<rect x="474.6" y="1025.75" width="2.3" height="13" fill="#666666" />
<rect x="501.55" y="1025.75" width="2.3" height="13" fill="#666666" />
<rect x="528.5" y="1025.75" width="2.3" height="13" fill="#666666" />
<rect x="555.45" y="1025.75" width="2.3" height="13" fill="#666666" />
<rect x="582.4" y="1025.75" width="2.3" height="13" fill="#666666" />
<rect x="609.35" y="1025.75" width="2.3" height="13" fill="#666666" />
<rect x="636.3" y="1025.75" width="2.3" height="13" fill="#666666" />
<rect x="663.25" y="1025.75" width="2.3" height="13" fill="#666666" />
<rect x="690.2" y="1025.75" width="2.3" height="13" fill="#666666" />
<rect x="717.15" y="1025.75" width="2.3" height="13" fill="#666666" />
<rect x="744.1" y="1025.75" width="2.3" height="13" fill="#666666" />
<rect x="771.05" y="1025.75" width="2.3" height="13" fill="#666666" />
<rect x="798" y="1025.75" width="2.3" height="13" fill="#666666" />
<rect x="824.95" y="1025.75" width="2.3" height="13" fill="#666666" />
<rect x="851.9" y="1008" width="2.3" height="30.75" fill="#7c7c7c" />
<rect x="879" y="1025.75" width="2.3" height="13" fill="#666666" />
<rect x="906.1" y="1025.75" width="2.3" height="13" fill="#666666" />
<rect x="933.2" y="1025.75" width="2.3" height="13" fill="#666666" />
<rect x="960.3" y="1025.75" width="2.3" height="13" fill="#666666" />
<rect x="987.4" y="1025.75" width="2.3" height="13" fill="#666666" />
<rect x="1014.5" y="1025.75" width="2.3" height="13" fill="#666666" />
<rect x="1041.6" y="1025.75" width="2.3" height="13" fill="#666666" />
<rect x="1068.7" y="1025.75" width="2.3" height="13" fill="#666666" />
<rect x="1095.8" y="1025.75" width="2.3" height="13" fill="#666666" />
<rect x="1122.9" y="1025.75" width="2.3" height="13" fill="#666666" />
<rect x="1150" y="1025.75" width="2.3" height="13" fill="#666666" />
<rect x="1177.1" y="1025.75" width="2.3" height="13" fill="#666666" />
<rect x="1204.2" y="1025.75" width="2.3" height="13" fill="#666666" />
<rect x="1231.3" y="1025.75" width="2.3" height="13" fill="#666666" />
<rect x="1258.4" y="1008" width="2.3" height="30.75" fill="#7c7c7c" />
<rect x="1285.35" y="1025.75" width="2.3" height="13" fill="#666666" />
<rect x="1312.3" y="1025.75" width="2.3" height="13" fill="#666666" />
<rect x="1339.25" y="1025.75" width="2.3" height="13" fill="#666666" />
<rect x="1366.2" y="1025.75" width="2.3" height="13" fill="#666666" />
<rect x="1393.15" y="1025.75" width="2.3" height="13" fill="#666666" />
<rect x="1420.1" y="1025.75" width="2.3" height="13" fill="#666666" />
<rect x="1447.05" y="1025.75" width="2.3" height="13" fill="#666666" />
<rect x="1474" y="1025.75" width="2.3" height="13" fill="#666666" />
<rect x="1500.95" y="1025.75" width="2.3" height="13" fill="#666666" />
<rect x="1527.9" y="1025.75" width="2.3" height="13" fill="#666666" />
<rect x="1554.85" y="1025.75" width="2.3" height="13" fill="#666666" />
<rect x="1581.8" y="1025.75" width="2.3" height="13" fill="#666666" />
<rect x="1608.75" y="1025.75" width="2.3" height="13" fill="#666666" />
<rect x="1635.7" y="1025.75" width="2.3" height="13" fill="#666666" />
<rect x="1662.65" y="1008" width="2.3" height="30.75" fill="#7c7c7c" />
<rect x="1689.6" y="1025.75" width="2.3" height="13" fill="#666666" />
<rect x="1716.55" y="1025.75" width="2.3" height="13" fill="#666666" />
<rect x="1743.5" y="1025.75" width="2.3" height="13" fill="#666666" />
<rect x="1770.45" y="1025.75" width="2.3" height="13" fill="#666666" />
<rect x="1797.4" y="1025.75" width="2.3" height="13" fill="#666666" />
<rect x="1824.35" y="1025.75" width="2.3" height="13" fill="#666666" />
<rect x="1851.3" y="1025.75" width="2.3" height="13" fill="#666666" />
<rect x="1878.25" y="1025.75" width="2.3" height="13" fill="#666666" />
<rect x="1905.2" y="1025.75" width="2.3" height="13" fill="#666666" />
<rect x="1932.15" y="1025.75" width="2.3" height="13" fill="#666666" />
<rect x="1959.1" y="1025.75" width="2.3" height="13" fill="#666666" />
<rect x="1986.05" y="1025.75" width="2.3" height="13" fill="#666666" />
<rect x="2013" y="1025.75" width="2.3" height="13" fill="#666666" />
<rect x="2039.95" y="1025.75" width="2.3" height="13" fill="#666666" />
<rect x="2066.9" y="1008" width="2.3" height="30.75" fill="#7c7c7c" />
<rect x="2094" y="1025.75" width="2.3" height="13" fill="#666666" />
<rect x="2121.1" y="1025.75" width="2.3" height="13" fill="#666666" />
<rect x="2148.2" y="1025.75" width="2.3" height="13" fill="#666666" />
<rect x="2175.3" y="1025.75" width="2.3" height="13" fill="#666666" />
<rect x="2202.4" y="1025.75" width="2.3" height="13" fill="#666666" />
<rect x="2229.5" y="1025.75" width="2.3" height="13" fill="#666666" />
<rect x="2256.6" y="1025.75" width="2.3" height="13" fill="#666666" />
<rect x="2283.7" y="1025.75" width="2.3" height="13" fill="#666666" />
<rect x="2310.8" y="1025.75" width="2.3" height="13" fill="#666666" />
<rect x="2337.9" y="1025.75" width="2.3" height="13" fill="#666666" />
<rect x="2365" y="1025.75" width="2.3" height="13" fill="#666666" />
<rect x="2392.1" y="1025.75" width="2.3" height="13" fill="#666666" />
<rect x="2419.2" y="1025.75" width="2.3" height="13" fill="#666666" />
<rect x="2446.3" y="1025.75" width="2.3" height="13" fill="#666666" />
<rect x="2473.4" y="1008" width="2.3" height="30.75" fill="#b4b4b4" />
<rect x="2500.4" y="1025.75" width="2.3" height="13" fill="#9c9c9c" />
<rect x="2527.4" y="1025.75" width="2.3" height="13" fill="#9c9c9c" />
<rect x="2554.4" y="1025.75" width="2.3" height="13" fill="#9c9c9c" />
<rect x="2581.4" y="1025.75" width="2.3" height="13" fill="#9c9c9c" />
<rect x="2608.4" y="1025.75" width="2.3" height="13" fill="#666666" />
<rect x="2635.4" y="1025.75" width="2.3" height="13" fill="#666666" />
<rect x="2662.4" y="1025.75" width="2.3" height="13" fill="#666666" />
<rect x="2689.4" y="1025.75" width="2.3" height="13" fill="#666666" />
<rect x="2716.4" y="1025.75" width="2.3" height="13" fill="#666666" />
<rect x="49" y="1041" width="2676" height="33.5" fill="#333333" rx="16.5" />
<circle cx="64.5" cy="1058" r="12.5" fill="#262626" stroke="#9a9a9a" stroke-width="6" />
<circle cx="2709" cy="1058" r="12.5" fill="#262626" stroke="#9a9a9a" stroke-width="6" />
<polygon points="1243,998 1276.75,998 1276.75,1021 1260,1036 1243,1021" fill="#2d8ceb" />
<rect x="1258.75" y="1027" width="2.5" height="10" fill="#000" />
<polygon points="811,1119 812,1118 839.5,1118 840.5,1119 840.5,1136.56 825.75,1150 811,1136.56" fill="#b2b2b2" />
<path d="M941 1114.5 V1127.5 L935 1132.7 L941 1138 V1151" fill="none" stroke="#b2b2b2" stroke-width="7" stroke-linejoin="round" stroke-linecap="round"/>
<path d="M1036 1114.5 V1127.5 L1042 1132.7 L1036 1138 V1151" fill="none" stroke="#b2b2b2" stroke-width="7" stroke-linejoin="round" stroke-linecap="round"/>
<path d="M1161.5 1114.5 V1127.5 L1156 1132.7 L1161.5 1138 V1151" fill="none" stroke="#b2b2b2" stroke-width="6.5" stroke-linejoin="round" stroke-linecap="round"/>
<polygon points="1168.5,1132.7 1183,1119.5 1183,1127.5 1199,1127.5 1199,1138 1183,1138 1183,1146" fill="#b2b2b2" />
<polygon points="1260,1132.5 1286,1119 1286,1146" fill="#b2b2b2" />
<rect x="1293" y="1119" width="7" height="27.5" fill="#b2b2b2" rx="1.5" />
<polygon points="1368,1117 1370,1115 1379,1115 1407.5,1132.5 1379,1150 1370,1150 1368,1148" fill="#b2b2b2" />
<rect x="1479.5" y="1118" width="6.8" height="28.7" fill="#b2b2b2" rx="1.5" />
<polygon points="1492.5,1119 1518.75,1132.5 1492.5,1146" fill="#b2b2b2" />
<polygon points="1608,1132.7 1593.5,1119.5 1593.5,1127.5 1577,1127.5 1577,1138 1593.5,1138 1593.5,1146" fill="#b2b2b2" />
<path d="M1615 1114.5 V1127.5 L1620.5 1132.7 L1615 1138 V1151" fill="none" stroke="#b2b2b2" stroke-width="6.5" stroke-linejoin="round" stroke-linecap="round"/>
<rect x="1702.5" y="1127.5" width="21.7" height="22.5" fill="#b2b2b2" />
<rect x="1740" y="1127.5" width="22" height="22.5" fill="#b2b2b2" />
<rect x="1718.8" y="1112" width="27.5" height="24.5" fill="#232323" />
<rect x="1720.3" y="1113.5" width="24.5" height="21.5" fill="none" stroke="#b2b2b2" stroke-width="3" />
<polygon points="1725.5,1128 1732.5,1119 1739.5,1128" fill="#b2b2b2" />
<rect x="1809" y="1127.5" width="21.7" height="22.5" fill="#b2b2b2" />
<rect x="1846.5" y="1127.5" width="22" height="22.5" fill="#b2b2b2" />
<rect x="1825.3" y="1112" width="27.5" height="24.5" fill="#232323" />
<rect x="1826.8" y="1113.5" width="24.5" height="21.5" fill="none" stroke="#b2b2b2" stroke-width="3" />
<polygon points="1832,1128 1839,1119 1846,1128" fill="#b2b2b2" />
<polygon points="1813,1132 1822,1139 1813,1146" fill="#232323" />
<polygon points="1864.5,1132 1855.5,1139 1864.5,1146" fill="#232323" />
<rect x="1926" y="1122" width="44.5" height="28" fill="#b2b2b2" rx="2" />
<polygon points="1938,1122 1942,1115 1955,1115 1959,1122" fill="#b2b2b2" />
<circle cx="1948" cy="1136.5" r="8.8" fill="#232323" />
<circle cx="1948" cy="1136.5" r="4.8" fill="#b2b2b2" />
<rect x="2049" y="1128" width="35" height="28" fill="#b2b2b2" />
<rect x="2057.5" y="1131.5" width="18" height="21" fill="#232323" />
<rect x="2052" y="1131" width="3" height="3" fill="#232323" />
<rect x="2078.5" y="1131" width="3" height="3" fill="#232323" />
<rect x="2052" y="1137.5" width="3" height="3" fill="#232323" />
<rect x="2078.5" y="1137.5" width="3" height="3" fill="#232323" />
<rect x="2052" y="1144" width="3" height="3" fill="#232323" />
<rect x="2078.5" y="1144" width="3" height="3" fill="#232323" />
<rect x="2052" y="1150.5" width="3" height="3" fill="#232323" />
<rect x="2078.5" y="1150.5" width="3" height="3" fill="#232323" />
<rect x="2024.5" y="1108.75" width="36" height="31" fill="#232323" />
<rect x="2024.5" y="1108.75" width="33.5" height="28.5" fill="#b2b2b2" />
<rect x="2027" y="1112" width="3.2" height="3.2" fill="#232323" />
<rect x="2052.3" y="1112" width="3.2" height="3.2" fill="#232323" />
<rect x="2027" y="1118.5" width="3.2" height="3.2" fill="#232323" />
<rect x="2052.3" y="1118.5" width="3.2" height="3.2" fill="#232323" />
<rect x="2027" y="1125" width="3.2" height="3.2" fill="#232323" />
<rect x="2052.3" y="1125" width="3.2" height="3.2" fill="#232323" />
<rect x="2027" y="1131.5" width="3.2" height="3.2" fill="#232323" />
<rect x="2052.3" y="1131.5" width="3.2" height="3.2" fill="#232323" />
<polygon points="2136,1115 2164,1115 2164,1136 2148,1136 2143,1131 2138,1136 2136,1136" fill="#b2b2b2" />
<rect x="2161" y="1141" width="22" height="14.5" fill="#b2b2b2" rx="1.5" />
<path d="M2167 1118 A17 17 0 0 1 2182 1134" fill="none" stroke="#b2b2b2" stroke-width="3.2" />
<polygon points="2176.5,1131.5 2187.5,1131.5 2182,1139" fill="#b2b2b2" />
<path d="M2158 1153 A17 17 0 0 1 2143.5 1140" fill="none" stroke="#b2b2b2" stroke-width="3.2" />
<polygon points="2138,1141.5 2149,1141.5 2143.5,1134.5" fill="#b2b2b2" />
<rect x="2655.5" y="1170" width="34" height="9.3" fill="#b8b8b8" rx="1.5" />
<rect x="2668" y="1158" width="9.3" height="33" fill="#b8b8b8" rx="1.5" />
<rect x="1267.6" y="1190" width="3.3" height="42" fill="#2d8ceb" />
<rect x="1276.6" y="1190" width="3.3" height="42" fill="#2d8ceb" />
<rect x="1258.75" y="1201.6" width="42.5" height="3.4" fill="#2d8ceb" />
<rect x="1258.75" y="1216.7" width="42.5" height="3.4" fill="#2d8ceb" />
<path d="M1366.75 1232.5 V1192.5 a3 3 0 0 1 3 -3 H1410 V1201.3 H1379.2 V1232.5 Z" fill="#2d8ceb" />
<rect x="1382.7" y="1192" width="2.6" height="5.8" fill="#10304f" />
<rect x="1391.2" y="1192" width="2.6" height="5.8" fill="#10304f" />
<rect x="1400.8" y="1192" width="2.6" height="5.8" fill="#10304f" />
<rect x="1370" y="1205" width="6" height="2.8" fill="#10304f" />
<rect x="1370" y="1214" width="6" height="2.8" fill="#10304f" />
<rect x="1370" y="1223.2" width="6" height="2.8" fill="#10304f" />
<rect x="1" y="1275" width="2766" height="14.5" fill="#161616" />
<rect x="2767" y="9" width="13.5" height="2058" fill="#161616" />
<rect x="10" y="1289.5" width="13" height="778" fill="#161616" />
<rect x="181" y="1289.5" width="13.5" height="778" fill="#161616" />
<rect x="2478" y="1289.5" width="14" height="778" fill="#161616" />
<rect x="0" y="2067" width="3567" height="8.5" fill="#161616" />
<rect x="0" y="2075.5" width="3567" height="7" fill="#272727" />
<rect x="0" y="2082.5" width="3567" height="1.5" fill="#b4b4b4" />
<rect x="0" y="0" width="1.3" height="2084" fill="#b0b0b0" />
<rect x="3565" y="0" width="2" height="2084" fill="#b4b4b4" />
<rect x="54.5" y="1341.5" width="82.5" height="78" fill="#151515" rx="5" stroke="#3a3a3a" stroke-width="1.6" />
<polygon points="80.5,1356 118,1391.5 98.5,1393.5 80.5,1410" fill="#2d8ceb" />
<rect x="69.5" y="1447.5" width="30" height="31" fill="none" stroke="#b2b2b2" stroke-width="3.2" stroke-dasharray="8 4.6" stroke-dashoffset="4"/>
<rect x="84" y="1455" width="26" height="16" fill="#232323" />
<polygon points="87.5,1458.5 106,1458.5 106,1452.5 122.5,1463 106,1473.5 106,1467.5 87.5,1467.5" fill="#b2b2b2" />
<polygon points="133,1487.5 133,1498 122.5,1498" fill="#b2b2b2" />
<rect x="93" y="1526" width="6.8" height="44" fill="#b2b2b2" rx="1.5" />
<polygon points="66,1547 87,1535 87,1559" fill="#b2b2b2" />
<polygon points="126,1547 105.5,1535 105.5,1559" fill="#b2b2b2" />
<rect x="78" y="1544.3" width="37" height="5.6" fill="#b2b2b2" />
<polygon points="133,1570.5 133,1581 122.5,1581" fill="#b2b2b2" />
<g transform="rotate(45 96.4 1632)">
<rect x="74.4" y="1619.5" width="44" height="25" fill="#b2b2b2" rx="3" />
<rect x="73.4" y="1629" width="3" height="6" fill="#232323" />
<rect x="116.4" y="1629" width="3" height="6" fill="#232323" />
<rect x="84.5" y="1631" width="24" height="2.2" fill="#2a2a2a" />
<circle cx="96.4" cy="1632" r="2.7" fill="#2a2a2a" />
<line x1="84.5" y1="1632" x2="81.5" y2="1628.5" stroke="#2a2a2a" stroke-width="2" stroke-linecap="butt"/>
<line x1="84.5" y1="1632" x2="81.5" y2="1635.5" stroke="#2a2a2a" stroke-width="2" stroke-linecap="butt"/>
<line x1="108.5" y1="1632" x2="111.5" y2="1628.5" stroke="#2a2a2a" stroke-width="2" stroke-linecap="butt"/>
<line x1="108.5" y1="1632" x2="111.5" y2="1635.5" stroke="#2a2a2a" stroke-width="2" stroke-linecap="butt"/>
</g>
<rect x="65.2" y="1691" width="6.4" height="44.5" fill="#b2b2b2" rx="1.5" />
<rect x="121" y="1691" width="6.6" height="44.5" fill="#b2b2b2" rx="1.5" />
<rect x="84" y="1709.5" width="25" height="4.2" fill="#b2b2b2" />
<polygon points="75,1711.6 87.2,1701.4 87.2,1721.8" fill="#b2b2b2" />
<polygon points="117.8,1711.6 105.6,1701.4 105.6,1721.8" fill="#b2b2b2" />
<polygon points="133,1734.5 133,1745 122.5,1745" fill="#b2b2b2" />
<path d="M71.5 1817.5 L79 1792.5 Q84 1783.5 95.5 1782 L108.5 1795 Q107.5 1805 97.5 1809.5 Z" fill="#b2b2b2" />
<line x1="73" y1="1816" x2="90.5" y2="1798.5" stroke="#232323" stroke-width="2.2" stroke-linecap="butt"/>
<circle cx="91.5" cy="1797.5" r="3" fill="#232323" />
<g transform="rotate(45 110 1782.5)">
<rect x="100.5" y="1775.5" width="19" height="14" fill="#b2b2b2" rx="1.5" />
</g>
<rect x="72.8" y="1858.5" width="47.5" height="41.5" fill="#464646" stroke="#b2b2b2" stroke-width="3.2" />
<polygon points="133,1899.5 133,1910 122.5,1910" fill="#b2b2b2" />
<path d="M84 1965 Q82 1987 97.5 1987.5 Q112 1987 112.5 1966 Z" fill="#b2b2b2" />
<path d="M84 1972 Q84 1987 97.5 1987 Q110 1987 111.5 1972 L111 1962 L85 1960 Z" fill="#b2b2b2" />
<line x1="88" y1="1968" x2="85.5" y2="1944" stroke="#b2b2b2" stroke-width="6.6" stroke-linecap="round"/>
<line x1="96.5" y1="1965" x2="96.8" y2="1939.5" stroke="#b2b2b2" stroke-width="6.6" stroke-linecap="round"/>
<line x1="104.5" y1="1966" x2="107.3" y2="1943" stroke="#b2b2b2" stroke-width="6.6" stroke-linecap="round"/>
<line x1="110" y1="1972" x2="116.5" y2="1953" stroke="#b2b2b2" stroke-width="6.6" stroke-linecap="round"/>
<line x1="88" y1="1978" x2="75" y2="1963" stroke="#b2b2b2" stroke-width="7" stroke-linecap="round"/>
<polygon points="133,1982.5 133,1993 122.5,1993" fill="#b2b2b2" />
<path d="M74.5 2022.5 a1 1 0 0 1 1 -1 H117 a1 1 0 0 1 1 1 V2034.5 H113 V2028.5 H101 V2059.8 H105 a1.5 1.5 0 0 1 1.5 1.5 V2064.5 a1.5 1.5 0 0 1 -1.5 1.5 H88 a1.5 1.5 0 0 1 -1.5 -1.5 V2061.3 a1.5 1.5 0 0 1 1.5 -1.5 H91.5 V2028.5 H79.5 V2034.5 H74.5 Z" fill="#b2b2b2" />
<line x1="230.5" y1="1328.5" x2="245.5" y2="1343.5" stroke="#a8a8a8" stroke-width="2.4" stroke-linecap="butt"/>
<line x1="245.5" y1="1328.5" x2="230.5" y2="1343.5" stroke="#a8a8a8" stroke-width="2.4" stroke-linecap="butt"/>
<text x="282" y="1345" font-size="35" fill="#d2d2d2" textLength="620" lengthAdjust="spacingAndGlyphs" >MS Exchange Recovery - snapshot - audio</text>
<rect x="949" y="1324.5" width="25" height="3.2" fill="#c4c4c4" />
<rect x="949" y="1333.7" width="25" height="3.2" fill="#c4c4c4" />
<rect x="949" y="1343" width="25" height="3.2" fill="#c4c4c4" />
<text x="249" y="1438" font-size="47.5" fill="#2d8ceb" textLength="265" lengthAdjust="spacingAndGlyphs" stroke="#2d8ceb" stroke-width="1">00;00;48;01</text>
<rect x="282" y="1466" width="4" height="36" fill="#2d8ceb" />
<rect x="279.5" y="1464.5" width="9" height="6" fill="#2d8ceb" />
<rect x="261" y="1484" width="17" height="4.5" fill="#2d8ceb" />
<rect x="290" y="1476" width="12" height="4.5" fill="#2d8ceb" />
<rect x="270" y="1495.5" width="12" height="4.5" fill="#2d8ceb" />
<rect x="293.5" y="1495.5" width="11" height="4.5" fill="#2d8ceb" />
<rect x="299" y="1493" width="5.5" height="9" fill="#2d8ceb" />
<rect x="261" y="1481.5" width="5" height="9" fill="#2d8ceb" />
<line x1="265" y1="1469.5" x2="299.5" y2="1503.5" stroke="#232323" stroke-width="7" stroke-linecap="butt"/>
<line x1="265" y1="1469.5" x2="299.5" y2="1503.5" stroke="#2d8ceb" stroke-width="3" stroke-linecap="butt"/>
<path d="M370 1504.5 V1484.5 A17.5 17.5 0 0 1 405 1484.5 V1504.5 H394.5 V1484.5 A7 7 0 0 0 380.5 1484.5 V1504.5 Z" fill="#2d8ceb" />
<rect x="370" y="1493" width="10.5" height="11.5" fill="#1c5a98" />
<rect x="394.5" y="1493" width="10.5" height="11.5" fill="#1c5a98" />
<rect x="469.3" y="1467" width="10.7" height="14.3" fill="#2d8ceb" />
<rect x="470.8" y="1487.5" width="9" height="11" fill="none" stroke="#2d8ceb" stroke-width="3" />
<rect x="476" y="1490.5" width="6" height="5" fill="#232323" />
<polygon points="484,1467 512.5,1467 512.5,1489" fill="#2d8ceb" />
<polygon points="484.5,1470 511,1494.5 497,1496.5 484.5,1508" fill="#2d8ceb" />
<polygon points="585.5,1475 586.5,1474 607,1474 608,1475 608,1489.52 596.75,1500.75 585.5,1489.52" fill="#b2b2b2" />
<g transform="translate(677.5 1464.5) scale(0.97)">
<line x1="16" y1="17" x2="38" y2="39" stroke="#b2b2b2" stroke-width="9.5" stroke-linecap="round"/>
<circle cx="12.5" cy="12.5" r="11.5" fill="#b2b2b2" />
<polygon points="0,-4 9,-4 14,7.5 7.5,14 -4,9 -4,0" fill="#232323" />
<circle cx="11.5" cy="11.5" r="0.1" fill="#232323" />
</g>
<rect x="779.5" y="1470" width="49.3" height="30.8" fill="#b2b2b2" rx="6.5" />
<text x="785.5" y="1496.8" font-size="28" fill="#232323" textLength="37.5" lengthAdjust="spacingAndGlyphs" font-weight="bold" stroke="#232323" stroke-width="1.3">CC</text>
<text x="1076" y="1460.5" font-size="36" fill="#a2a2a2" textLength="174" lengthAdjust="spacingAndGlyphs" >00;00;46;00</text>
<text x="1453.75" y="1460.5" font-size="36" fill="#a2a2a2" textLength="175" lengthAdjust="spacingAndGlyphs" >00;00;48;00</text>
<text x="1833.75" y="1460.5" font-size="36" fill="#a2a2a2" textLength="174" lengthAdjust="spacingAndGlyphs" >00;00;50;00</text>
<text x="2212.5" y="1460.5" font-size="36" fill="#a2a2a2" textLength="175" lengthAdjust="spacingAndGlyphs" >00;00;52;00</text>
<rect x="931.137" y="1492.5" width="2.5" height="14.5" fill="#5c5c5c" />
<rect x="956.344" y="1492.5" width="2.5" height="14.5" fill="#5c5c5c" />
<rect x="981.551" y="1492.5" width="2.5" height="14.5" fill="#5c5c5c" />
<rect x="1006.76" y="1492.5" width="2.5" height="14.5" fill="#5c5c5c" />
<rect x="1031.96" y="1492.5" width="2.5" height="14.5" fill="#5c5c5c" />
<rect x="1057.17" y="1492.5" width="2.5" height="14.5" fill="#5c5c5c" />
<rect x="1082.38" y="1492.5" width="2.5" height="14.5" fill="#5c5c5c" />
<rect x="1107.59" y="1492.5" width="2.5" height="14.5" fill="#5c5c5c" />
<rect x="1132.79" y="1492.5" width="2.5" height="14.5" fill="#5c5c5c" />
<rect x="1158" y="1474" width="2.5" height="33" fill="#6e6e6e" />
<rect x="1183.21" y="1492.5" width="2.5" height="14.5" fill="#5c5c5c" />
<rect x="1208.41" y="1492.5" width="2.5" height="14.5" fill="#5c5c5c" />
<rect x="1233.62" y="1492.5" width="2.5" height="14.5" fill="#5c5c5c" />
<rect x="1258.83" y="1492.5" width="2.5" height="14.5" fill="#5c5c5c" />
<rect x="1284.04" y="1492.5" width="2.5" height="14.5" fill="#5c5c5c" />
<rect x="1309.24" y="1492.5" width="2.5" height="14.5" fill="#5c5c5c" />
<rect x="1334.45" y="1492.5" width="2.5" height="14.5" fill="#5c5c5c" />
<rect x="1359.66" y="1492.5" width="2.5" height="14.5" fill="#5c5c5c" />
<rect x="1384.86" y="1492.5" width="2.5" height="14.5" fill="#5c5c5c" />
<rect x="1410.07" y="1492.5" width="2.5" height="14.5" fill="#5c5c5c" />
<rect x="1435.28" y="1492.5" width="2.5" height="14.5" fill="#5c5c5c" />
<rect x="1460.48" y="1492.5" width="2.5" height="14.5" fill="#5c5c5c" />
<rect x="1485.69" y="1492.5" width="2.5" height="14.5" fill="#5c5c5c" />
<rect x="1510.9" y="1492.5" width="2.5" height="14.5" fill="#5c5c5c" />
<rect x="1536.11" y="1474" width="2.5" height="33" fill="#6e6e6e" />
<rect x="1561.31" y="1492.5" width="2.5" height="14.5" fill="#5c5c5c" />
<rect x="1586.52" y="1492.5" width="2.5" height="14.5" fill="#5c5c5c" />
<rect x="1611.73" y="1492.5" width="2.5" height="14.5" fill="#5c5c5c" />
<rect x="1636.93" y="1492.5" width="2.5" height="14.5" fill="#5c5c5c" />
<rect x="1662.14" y="1492.5" width="2.5" height="14.5" fill="#5c5c5c" />
<rect x="1687.35" y="1492.5" width="2.5" height="14.5" fill="#5c5c5c" />
<rect x="1712.55" y="1492.5" width="2.5" height="14.5" fill="#5c5c5c" />
<rect x="1737.76" y="1492.5" width="2.5" height="14.5" fill="#5c5c5c" />
<rect x="1762.97" y="1492.5" width="2.5" height="14.5" fill="#5c5c5c" />
<rect x="1788.18" y="1492.5" width="2.5" height="14.5" fill="#5c5c5c" />
<rect x="1813.38" y="1492.5" width="2.5" height="14.5" fill="#5c5c5c" />
<rect x="1838.59" y="1492.5" width="2.5" height="14.5" fill="#5c5c5c" />
<rect x="1863.8" y="1492.5" width="2.5" height="14.5" fill="#5c5c5c" />
<rect x="1889" y="1492.5" width="2.5" height="14.5" fill="#5c5c5c" />
<rect x="1914.21" y="1474" width="2.5" height="33" fill="#6e6e6e" />
<rect x="1939.42" y="1492.5" width="2.5" height="14.5" fill="#5c5c5c" />
<rect x="1964.62" y="1492.5" width="2.5" height="14.5" fill="#5c5c5c" />
<rect x="1989.83" y="1492.5" width="2.5" height="14.5" fill="#5c5c5c" />
<rect x="2015.04" y="1492.5" width="2.5" height="14.5" fill="#5c5c5c" />
<rect x="2040.24" y="1492.5" width="2.5" height="14.5" fill="#5c5c5c" />
<rect x="2065.45" y="1492.5" width="2.5" height="14.5" fill="#5c5c5c" />
<rect x="2090.66" y="1492.5" width="2.5" height="14.5" fill="#5c5c5c" />
<rect x="2115.87" y="1492.5" width="2.5" height="14.5" fill="#5c5c5c" />
<rect x="2141.07" y="1492.5" width="2.5" height="14.5" fill="#5c5c5c" />
<rect x="2166.28" y="1492.5" width="2.5" height="14.5" fill="#5c5c5c" />
<rect x="2191.49" y="1492.5" width="2.5" height="14.5" fill="#5c5c5c" />
<rect x="2216.69" y="1492.5" width="2.5" height="14.5" fill="#5c5c5c" />
<rect x="2241.9" y="1492.5" width="2.5" height="14.5" fill="#5c5c5c" />
<rect x="2267.11" y="1492.5" width="2.5" height="14.5" fill="#5c5c5c" />
<rect x="2292.32" y="1474" width="2.5" height="33" fill="#6e6e6e" />
<rect x="2317.52" y="1492.5" width="2.5" height="14.5" fill="#5c5c5c" />
<rect x="2342.73" y="1492.5" width="2.5" height="14.5" fill="#5c5c5c" />
<rect x="2367.94" y="1492.5" width="2.5" height="14.5" fill="#5c5c5c" />
<rect x="2393.14" y="1492.5" width="2.5" height="14.5" fill="#5c5c5c" />
<polygon points="1183.5,1382 1205.2,1382 1205.2,1411 1194.4,1420.8 1183.5,1411" fill="#d52c3a" />
<polygon points="2064.5,1382 2086.2,1382 2086.2,1411 2075.4,1420.8 2064.5,1411" fill="#d52c3a" />
<rect x="194.5" y="1514" width="723" height="479" fill="#252525" />
<rect x="491" y="1514" width="163.5" height="323" fill="#272727" />
<rect x="491" y="1853" width="82" height="72" fill="#272727" />
<rect x="491" y="1964" width="82" height="29" fill="#272727" />
<rect x="918" y="1514" width="1490.5" height="479" fill="#202020" />
<rect x="917" y="1514" width="1.5" height="479" fill="#2e2e2e" />
<rect x="194.5" y="1555.3" width="2214" height="1.5" fill="#343434" />
<rect x="194.5" y="1715.3" width="2214" height="1.5" fill="#343434" />
<rect x="194.5" y="1791.8" width="2214" height="1.5" fill="#343434" />
<rect x="194.5" y="1962.8" width="2214" height="1.5" fill="#343434" />
<rect x="194.5" y="1632.5" width="2250.5" height="13.5" fill="#303030" />
<rect x="194.5" y="1837" width="2250.5" height="16" fill="#303030" />
<rect x="194.5" y="1511" width="2283.5" height="1.2" fill="#2c2c2c" />
<clipPath id="cph"><rect x="194.5" y="1514" width="2284" height="479"/></clipPath>
<g clip-path="url(#cph)">
<path d="M356 1516.5 V1510 a7.2 7.2 0 0 1 13 -4.2" fill="none" stroke="#b2b2b2" stroke-width="4.4" />
<rect x="351" y="1514.5" width="26" height="17" fill="#b2b2b2" rx="1" />
<circle cx="364" cy="1521" r="3.3" fill="#232323" />
<rect x="362.5" y="1521.5" width="3" height="6.5" fill="#232323" />
<rect x="355" y="1506" width="20" height="8.5" fill="#252525" />
<path d="M356 1514 V1510" fill="none" stroke="#b2b2b2" stroke-width="4.4" />
<text x="425" y="1548" font-size="30" fill="#a9a9a9" textLength="29" lengthAdjust="spacingAndGlyphs" >C2</text>
<rect x="517.3" y="1506.3" width="23.5" height="9" fill="none" stroke="#b2b2b2" stroke-width="3.7" />
<rect x="517.3" y="1521.3" width="23.5" height="9" fill="none" stroke="#b2b2b2" stroke-width="3.7" />
<polyline points="542,1510.8 551.3,1510.8 551.3,1526.7 542,1526.7" fill="none" stroke="#b2b2b2" stroke-width="3.6" stroke-linecap="butt" stroke-linejoin="miter"/>
<path d="M595 1520.5 Q607.25 1506.5 615.25 1507 Q623.25 1506.5 635.5 1520.5 Q623.25 1534.5 615.25 1534 Q607.25 1534.5 595 1520.5 Z" fill="#b2b2b2" />
<circle cx="615.25" cy="1520.5" r="7.8" fill="#262626" />
<circle cx="618.25" cy="1517.3" r="2" fill="#b2b2b2" />
<text x="664.5" y="1530" font-size="36" fill="#a9a9a9" textLength="111" lengthAdjust="spacingAndGlyphs" >Subtitle</text>
<path d="M356 1592 V1585.5 a7.2 7.2 0 0 1 13 -4.2" fill="none" stroke="#b2b2b2" stroke-width="4.4" />
<rect x="351" y="1590" width="26" height="17" fill="#b2b2b2" rx="1" />
<circle cx="364" cy="1596.5" r="3.3" fill="#232323" />
<rect x="362.5" y="1597" width="3" height="6.5" fill="#232323" />
<text x="425" y="1610" font-size="30" fill="#a9a9a9" textLength="29" lengthAdjust="spacingAndGlyphs" >C1</text>
<rect x="517.3" y="1582.3" width="23.5" height="9" fill="none" stroke="#b2b2b2" stroke-width="3.7" />
<rect x="517.3" y="1597.3" width="23.5" height="9" fill="none" stroke="#b2b2b2" stroke-width="3.7" />
<polyline points="542,1586.8 551.3,1586.8 551.3,1602.7 542,1602.7" fill="none" stroke="#b2b2b2" stroke-width="3.6" stroke-linecap="butt" stroke-linejoin="miter"/>
<path d="M595 1597 Q607.25 1583 615.25 1583.5 Q623.25 1583 635.5 1597 Q623.25 1611 615.25 1610.5 Q607.25 1611 595 1597 Z" fill="#2d8ceb" />
<circle cx="615.25" cy="1597" r="7.8" fill="#262626" />
<circle cx="618.25" cy="1593.8" r="2" fill="#2d8ceb" />
<line x1="597.5" y1="1578.5" x2="634" y2="1616.5" stroke="#262626" stroke-width="7" stroke-linecap="butt"/>
<line x1="597.5" y1="1578.5" x2="634" y2="1616.5" stroke="#2d8ceb" stroke-width="3.2" stroke-linecap="butt"/>
<text x="664.5" y="1608" font-size="36" fill="#a9a9a9" textLength="111" lengthAdjust="spacingAndGlyphs" >Subtitle</text>
<path d="M356 1676 V1669.5 a7.2 7.2 0 0 1 13 -4.2" fill="none" stroke="#b2b2b2" stroke-width="4.4" />
<rect x="351" y="1674" width="26" height="17" fill="#b2b2b2" rx="1" />
<circle cx="364" cy="1680.5" r="3.3" fill="#232323" />
<rect x="362.5" y="1681" width="3" height="6.5" fill="#232323" />
<text x="421" y="1692" font-size="30" fill="#a9a9a9" textLength="31.5" lengthAdjust="spacingAndGlyphs" >V3</text>
<rect x="517.3" y="1663.8" width="23.5" height="9" fill="none" stroke="#b2b2b2" stroke-width="3.7" />
<rect x="517.3" y="1678.8" width="23.5" height="9" fill="none" stroke="#b2b2b2" stroke-width="3.7" />
<polyline points="542,1668.3 551.3,1668.3 551.3,1684.2 542,1684.2" fill="none" stroke="#b2b2b2" stroke-width="3.6" stroke-linecap="butt" stroke-linejoin="miter"/>
<path d="M595 1679.5 Q607.25 1665.5 615.25 1666 Q623.25 1665.5 635.5 1679.5 Q623.25 1693.5 615.25 1693 Q607.25 1693.5 595 1679.5 Z" fill="#b2b2b2" />
<circle cx="615.25" cy="1679.5" r="7.8" fill="#262626" />
<circle cx="618.25" cy="1676.3" r="2" fill="#b2b2b2" />
<path d="M356 1751.5 V1745 a7.2 7.2 0 0 1 13 -4.2" fill="none" stroke="#b2b2b2" stroke-width="4.4" />
<rect x="351" y="1749.5" width="26" height="17" fill="#b2b2b2" rx="1" />
<circle cx="364" cy="1756" r="3.3" fill="#232323" />
<rect x="362.5" y="1756.5" width="3" height="6.5" fill="#232323" />
<text x="421" y="1769" font-size="30" fill="#a9a9a9" textLength="31.5" lengthAdjust="spacingAndGlyphs" >V2</text>
<rect x="517.3" y="1740.55" width="23.5" height="9" fill="none" stroke="#b2b2b2" stroke-width="3.7" />
<rect x="517.3" y="1755.55" width="23.5" height="9" fill="none" stroke="#b2b2b2" stroke-width="3.7" />
<polyline points="542,1745.05 551.3,1745.05 551.3,1760.95 542,1760.95" fill="none" stroke="#b2b2b2" stroke-width="3.6" stroke-linecap="butt" stroke-linejoin="miter"/>
<path d="M595 1757 Q607.25 1743 615.25 1743.5 Q623.25 1743 635.5 1757 Q623.25 1771 615.25 1770.5 Q607.25 1771 595 1757 Z" fill="#b2b2b2" />
<circle cx="615.25" cy="1757" r="7.8" fill="#262626" />
<circle cx="618.25" cy="1753.8" r="2" fill="#b2b2b2" />
<rect x="393" y="1793.3" width="98" height="43.7" fill="#0b5a8c" />
<path d="M356 1812.3 V1805.8 a7.2 7.2 0 0 1 13 -4.2" fill="none" stroke="#b2b2b2" stroke-width="4.4" />
<rect x="351" y="1810.3" width="26" height="17" fill="#b2b2b2" rx="1" />
<circle cx="364" cy="1816.8" r="3.3" fill="#232323" />
<rect x="362.5" y="1817.3" width="3" height="6.5" fill="#232323" />
<text x="421" y="1830.5" font-size="30" fill="#a5b7c4" textLength="31.5" lengthAdjust="spacingAndGlyphs" >V1</text>
<rect x="517.3" y="1803.1" width="23.5" height="9" fill="none" stroke="#b2b2b2" stroke-width="3.7" />
<rect x="517.3" y="1818.1" width="23.5" height="9" fill="none" stroke="#b2b2b2" stroke-width="3.7" />
<polyline points="542,1807.6 551.3,1807.6 551.3,1823.5 542,1823.5" fill="none" stroke="#b2b2b2" stroke-width="3.6" stroke-linecap="butt" stroke-linejoin="miter"/>
<path d="M595 1817.5 Q607.25 1803.5 615.25 1804 Q623.25 1803.5 635.5 1817.5 Q623.25 1831.5 615.25 1831 Q607.25 1831.5 595 1817.5 Z" fill="#b2b2b2" />
<circle cx="615.25" cy="1817.5" r="7.8" fill="#262626" />
<circle cx="618.25" cy="1814.3" r="2" fill="#b2b2b2" />
<rect x="393" y="1853" width="98" height="110" fill="#0b5a8c" />
<path d="M356 1905.3 V1898.8 a7.2 7.2 0 0 1 13 -4.2" fill="none" stroke="#b2b2b2" stroke-width="4.4" />
<rect x="351" y="1903.3" width="26" height="17" fill="#b2b2b2" rx="1" />
<circle cx="364" cy="1909.8" r="3.3" fill="#232323" />
<rect x="362.5" y="1910.3" width="3" height="6.5" fill="#232323" />
<text x="421" y="1921.5" font-size="30" fill="#a5b7c4" textLength="31.5" lengthAdjust="spacingAndGlyphs" >A1</text>
<rect x="517.3" y="1875.8" width="23.5" height="9" fill="none" stroke="#b2b2b2" stroke-width="3.7" />
<rect x="517.3" y="1890.8" width="23.5" height="9" fill="none" stroke="#b2b2b2" stroke-width="3.7" />
<polyline points="542,1880.3 551.3,1880.3 551.3,1896.2 542,1896.2" fill="none" stroke="#b2b2b2" stroke-width="3.6" stroke-linecap="butt" stroke-linejoin="miter"/>
<text x="604" y="1901.5" font-size="30" fill="#c0c0c0" textLength="23.5" lengthAdjust="spacingAndGlyphs" >M</text>
<text x="689.5" y="1901.5" font-size="30" fill="#c0c0c0" textLength="19" lengthAdjust="spacingAndGlyphs" >S</text>
<rect x="773.5" y="1868.6" width="15.5" height="30" fill="#b2b2b2" rx="7.7" />
<path d="M767.5 1888 a13.5 13.5 0 0 0 27 0" fill="none" stroke="#b2b2b2" stroke-width="3.2" />
<rect x="779.7" y="1901" width="3.2" height="8.5" fill="#b2b2b2" />
<rect x="771.5" y="1908.8" width="19.5" height="3.2" fill="#b2b2b2" />
<path d="M356 2000 V1993.5 a7.2 7.2 0 0 1 13 -4.2" fill="none" stroke="#b2b2b2" stroke-width="4.4" />
<rect x="351" y="1998" width="26" height="17" fill="#b2b2b2" rx="1" />
<circle cx="364" cy="2004.5" r="3.3" fill="#232323" />
<rect x="362.5" y="2005" width="3" height="6.5" fill="#232323" />
<rect x="517.3" y="1990.3" width="23.5" height="9" fill="none" stroke="#b2b2b2" stroke-width="3.7" />
<rect x="517.3" y="2005.3" width="23.5" height="9" fill="none" stroke="#b2b2b2" stroke-width="3.7" />
<polyline points="542,1994.8 551.3,1994.8 551.3,2010.7 542,2010.7" fill="none" stroke="#b2b2b2" stroke-width="3.6" stroke-linecap="butt" stroke-linejoin="miter"/>
<path d="M770.5 1993 a10.5 10.5 0 0 1 21 0 z" fill="#b2b2b2" />
</g>
<clipPath id="cpc"><rect x="918" y="1515" width="1490" height="478"/></clipPath>
<g clip-path="url(#cpc)">
<rect x="918.75" y="1515" width="16.75" height="40.5" fill="#f0a83e" />
<rect x="938" y="1515" width="483.5" height="40.5" fill="#f0a83e" />
<rect x="938" y="1515" width="1.8" height="40.5" fill="#fbd58f" />
<rect x="1425" y="1515" width="496" height="40.5" fill="#f0a83e" />
<rect x="1425" y="1515" width="1.8" height="40.5" fill="#fbd58f" />
<rect x="1924.5" y="1515" width="281" height="40.5" fill="#f0a83e" />
<rect x="1924.5" y="1515" width="1.8" height="40.5" fill="#fbd58f" />
<rect x="2209" y="1515" width="199" height="40.5" fill="#f0a83e" />
<rect x="2209" y="1515" width="1.8" height="40.5" fill="#fbd58f" />
<rect x="934.8" y="1515" width="2.2" height="40.7" fill="#3a2c14" />
<rect x="1421.8" y="1515" width="2.2" height="40.7" fill="#3a2c14" />
<rect x="1921.3" y="1515" width="2.2" height="40.7" fill="#3a2c14" />
<rect x="2205.8" y="1515" width="2.2" height="40.7" fill="#3a2c14" />
<text x="953.75" y="1537" font-size="36" fill="#0c0c0c" textLength="411" lengthAdjust="spacingAndGlyphs" stroke="#0c0c0c" stroke-width="0.7">that will help you find ...</text>
<text x="1442" y="1537" font-size="36" fill="#0c0c0c" textLength="430.5" lengthAdjust="spacingAndGlyphs" stroke="#0c0c0c" stroke-width="0.7">Or, click the arrow next ...</text>
<text x="1940" y="1537" font-size="36" fill="#0c0c0c" textLength="200" lengthAdjust="spacingAndGlyphs" stroke="#0c0c0c" stroke-width="0.7">and enter ...</text>
<text x="2237.5" y="1537" font-size="36" fill="#0c0c0c" textLength="157.5" lengthAdjust="spacingAndGlyphs" stroke="#0c0c0c" stroke-width="0.7">such as ...</text>
<rect x="2404" y="1546" width="4" height="9.7" fill="#111" />
<rect x="918.75" y="1646" width="34.75" height="68.5" fill="#769fd1" />
<rect x="956.25" y="1646" width="334.25" height="68.5" fill="#769fd1" />
<rect x="956.25" y="1646" width="2" height="68.5" fill="#bcd2ee" />
<rect x="1293.75" y="1646" width="652.25" height="68.5" fill="#769fd1" />
<rect x="1293.75" y="1646" width="2" height="68.5" fill="#bcd2ee" />
<rect x="1948.75" y="1646" width="223.25" height="68.5" fill="#769fd1" />
<rect x="1948.75" y="1646" width="2" height="68.5" fill="#bcd2ee" />
<rect x="2175" y="1646" width="233" height="68.5" fill="#769fd1" />
<rect x="2175" y="1646" width="2" height="68.5" fill="#bcd2ee" />
<rect x="953.25" y="1646" width="2" height="68.5" fill="#2c3c52" />
<rect x="1290.75" y="1646" width="2" height="68.5" fill="#2c3c52" />
<rect x="1945.75" y="1646" width="2" height="68.5" fill="#2c3c52" />
<rect x="2172" y="1646" width="2" height="68.5" fill="#2c3c52" />
<rect x="989" y="1651.75" width="34" height="30" fill="#f6c500" stroke="#bdb38c" stroke-width="2" />
<text x="993" y="1676.25" font-size="27" fill="#4a4000" textLength="26" lengthAdjust="spacingAndGlyphs" font-style="italic" >fx</text>
<text x="1046" y="1678.75" font-size="29" fill="#12122c" textLength="234" lengthAdjust="spacingAndGlyphs" >Granular recovery -</text>
<rect x="1324.75" y="1651.75" width="34" height="30" fill="#f6c500" stroke="#bdb38c" stroke-width="2" />
<text x="1328.75" y="1676.25" font-size="27" fill="#4a4000" textLength="26" lengthAdjust="spacingAndGlyphs" font-style="italic" >fx</text>
<text x="1382" y="1678.75" font-size="29" fill="#12122c" textLength="348" lengthAdjust="spacingAndGlyphs" >Granular recovery - raw.mp4</text>
<rect x="1981" y="1651.75" width="34" height="30" fill="#f6c500" stroke="#bdb38c" stroke-width="2" />
<text x="1985" y="1676.25" font-size="27" fill="#4a4000" textLength="26" lengthAdjust="spacingAndGlyphs" font-style="italic" >fx</text>
<text x="2037.5" y="1678.75" font-size="29" fill="#12122c" textLength="122.5" lengthAdjust="spacingAndGlyphs" >Granular r</text>
<rect x="2206.5" y="1651.75" width="34" height="30" fill="#f6c500" stroke="#bdb38c" stroke-width="2" />
<text x="2210.5" y="1676.25" font-size="27" fill="#4a4000" textLength="26" lengthAdjust="spacingAndGlyphs" font-style="italic" >fx</text>
<text x="2265" y="1678.75" font-size="29" fill="#12122c" textLength="137" lengthAdjust="spacingAndGlyphs" >Granular re</text>
<rect x="2175" y="1692.5" width="233" height="3" fill="#eef2ff" />
<rect x="2175" y="1695.5" width="233" height="12" fill="#5c6cff" />
<rect x="2175" y="1707.5" width="233" height="6.5" fill="#ffffff" />
<rect x="918.75" y="1853" width="1489.25" height="112" fill="#dddddd" />
<rect x="918.75" y="1865" width="1489.25" height="35" fill="#166b4e" />
<rect x="918.75" y="1909" width="1489.25" height="42" fill="#166b4e" />
<rect x="918.75" y="1900" width="1489.25" height="2.2" fill="#ffffff" />
<rect x="918.75" y="1902.2" width="1489.25" height="3" fill="#111" />
<rect x="918.75" y="1905.2" width="1489.25" height="3.8" fill="#f4f4f4" />
<polygon points="1442,1900 1442,1898.83 1444.1,1898.83 1444.1,1889.92 1446.2,1889.92 1446.2,1887.89 1448.3,1887.89 1448.3,1886.04 1450.4,1886.04 1450.4,1887.75 1452.5,1887.75 1452.5,1883.41 1454.6,1883.41 1454.6,1886 1456.7,1886 1456.7,1885.66 1458.8,1885.66 1458.8,1885.34 1460.9,1885.34 1460.9,1880.97 1463,1880.97 1463,1881.12 1465.1,1881.12 1465.1,1878.96 1467.2,1878.96 1467.2,1878.7 1469.3,1878.7 1469.3,1877.58 1471.4,1877.58 1471.4,1876.45 1473.5,1876.45 1473.5,1878.23 1475.6,1878.23 1475.6,1881.47 1477.7,1881.47 1477.7,1879.49 1479.8,1879.49 1479.8,1881.45 1481.9,1881.45 1481.9,1882.54 1484,1882.54 1484,1879.25 1486.1,1879.25 1486.1,1877.47 1488.2,1877.47 1488.2,1881.14 1490.3,1881.14 1490.3,1881.9 1492.4,1881.9 1492.4,1882.91 1494.5,1882.91 1494.5,1882.46 1496.6,1882.46 1496.6,1885 1498.7,1885 1498.7,1886.18 1500.8,1886.18 1500.8,1887.59 1502.9,1887.59 1502.9,1890.78 1505,1890.78 1505,1891.57 1507.1,1891.57 1507.1,1893.4 1509.2,1893.4 1509.2,1896.61 1511.3,1896.61 1511.3,1897.64 1513.4,1897.64 1513.4,1897.94 1515.5,1897.94 1515.5,1898.32 1517.6,1898.32 1517.6,1898.11 1519.7,1898.11 1519.7,1898 1521.8,1898 1521.8,1897.82 1523.9,1897.82 1523.9,1898.16 1526,1898.16 1526,1898.04 1528.1,1898.04 1528.1,1897.84 1530.2,1897.84 1530.2,1897.89 1532.3,1897.89 1532.3,1897.8 1534.4,1897.8 1534.4,1898.1 1536.5,1898.1 1536.5,1897.98 1538.6,1897.98 1538.6,1898.27 1540.7,1898.27 1540.7,1897.94 1542.8,1897.94 1542.8,1897.88 1544.9,1897.88 1544.9,1897.99 1547,1897.99 1547,1897.94 1549.1,1897.94 1549.1,1898.26 1551.2,1898.26 1551.2,1897.82 1553.3,1897.82 1553.3,1897.77 1555.4,1897.77 1555.4,1897.77 1557.5,1897.77 1557.5,1898.06 1559.6,1898.06 1559.6,1897.89 1561.7,1897.89 1561.7,1896.05 1563.8,1896.05 1563.8,1890.79 1565.9,1890.79 1565.9,1886.93 1568,1886.93 1568,1887.67 1570.1,1887.67 1570.1,1887.7 1572.2,1887.7 1572.2,1884.72 1574.3,1884.72 1574.3,1884.69 1576.4,1884.69 1576.4,1886.72 1578.5,1886.72 1578.5,1890.71 1580.6,1890.71 1580.6,1894.55 1582.7,1894.55 1582.7,1893.32 1584.8,1893.32 1584.8,1894.49 1586.9,1894.49 1586.9,1892.48 1589,1892.48 1589,1893.56 1591.1,1893.56 1591.1,1892.8 1593.2,1892.8 1593.2,1889.66 1595.3,1889.66 1595.3,1889.86 1597.4,1889.86 1597.4,1887.99 1599.5,1887.99 1599.5,1884.41 1601.6,1884.41 1601.6,1882.35 1603.7,1882.35 1603.7,1880.69 1605.8,1880.69 1605.8,1880.59 1607.9,1880.59 1607.9,1877.97 1610,1877.97 1610,1881.18 1612.1,1881.18 1612.1,1878.7 1614.2,1878.7 1614.2,1884.32 1616.3,1884.32 1616.3,1883.81 1618.4,1883.81 1618.4,1882.34 1620.5,1882.34 1620.5,1885.35 1622.6,1885.35 1622.6,1888.1 1624.7,1888.1 1624.7,1893.33 1626.8,1893.33 1626.8,1893.85 1628.9,1893.85 1628.9,1892.77 1631,1892.77 1631,1892.98 1633.1,1892.98 1633.1,1893.18 1635.2,1893.18 1635.2,1892.64 1637.3,1892.64 1637.3,1884.3 1639.4,1884.3 1639.4,1878.18 1641.5,1878.18 1641.5,1882.44 1643.6,1882.44 1643.6,1878.04 1645.7,1878.04 1645.7,1877.03 1647.8,1877.03 1647.8,1879.77 1649.9,1879.77 1649.9,1879.23 1652,1879.23 1652,1881.56 1654.1,1881.56 1654.1,1879.06 1656.2,1879.06 1656.2,1879.08 1658.3,1879.08 1658.3,1878.16 1660.4,1878.16 1660.4,1882.7 1662.5,1882.7 1662.5,1877 1664.6,1877 1664.6,1880.66 1666.7,1880.66 1666.7,1882.03 1668.8,1882.03 1668.8,1880.27 1670.9,1880.27 1670.9,1882.36 1673,1882.36 1673,1883.42 1675.1,1883.42 1675.1,1882.86 1677.2,1882.86 1677.2,1886.55 1679.3,1886.55 1679.3,1884.47 1681.4,1884.47 1681.4,1885.49 1683.5,1885.49 1683.5,1883.23 1685.6,1883.23 1685.6,1883.84 1687.7,1883.84 1687.7,1887.29 1689.8,1887.29 1689.8,1886.74 1691.9,1886.74 1691.9,1888.63 1694,1888.63 1694,1887.68 1696.1,1887.68 1696.1,1886.28 1698.2,1886.28 1698.2,1886.04 1700.3,1886.04 1700.3,1887.88 1702.4,1887.88 1702.4,1888.62 1704.5,1888.62 1704.5,1889.22 1706.6,1889.22 1706.6,1887.61 1708.7,1887.61 1708.7,1886.5 1710.8,1886.5 1710.8,1889.72 1712.9,1889.72 1712.9,1887.29 1715,1887.29 1715,1890.3 1717.1,1890.3 1717.1,1892.4 1719.2,1892.4 1719.2,1895.5 1721.3,1895.5 1721.3,1896.08 1723.4,1896.08 1723.4,1894.69 1725.5,1894.69 1725.5,1892.77 1727.6,1892.77 1727.6,1892.4 1729.7,1892.4 1729.7,1893.99 1731.8,1893.99 1731.8,1892.97 1733.9,1892.97 1733.9,1894.64 1736,1894.64 1736,1894.24 1738.1,1894.24 1738.1,1895.09 1740.2,1895.09 1740.2,1895.54 1742.3,1895.54 1742.3,1895.38 1744.4,1895.38 1744.4,1895.91 1746.5,1895.91 1746.5,1896.13 1748.6,1896.13 1748.6,1894.56 1750.7,1894.56 1750.7,1892.77 1752.8,1892.77 1752.8,1892.26 1754.9,1892.26 1754.9,1890.72 1757,1890.72 1757,1887.76 1759.1,1887.76 1759.1,1886.71 1761.2,1886.71 1761.2,1886.18 1763.3,1886.18 1763.3,1883.63 1765.4,1883.63 1765.4,1883.78 1767.5,1883.78 1767.5,1882.33 1769.6,1882.33 1769.6,1887.21 1771.7,1887.21 1771.7,1886.74 1773.8,1886.74 1773.8,1888.39 1775.9,1888.39 1775.9,1890.06 1778,1890.06 1778,1893.07 1780.1,1893.07 1780.1,1893.81 1782.2,1893.81 1782.2,1893.36 1784.3,1893.36 1784.3,1895.44 1786.4,1895.44 1786.4,1895.04 1788.5,1895.04 1788.5,1894.83 1790.6,1894.83 1790.6,1894.61 1792.7,1894.61 1792.7,1892.97 1794.8,1892.97 1794.8,1890.04 1796.9,1890.04 1796.9,1891.92 1799,1891.92 1799,1893.3 1801.1,1893.3 1801.1,1892.56 1803.2,1892.56 1803.2,1894.43 1805.3,1894.43 1805.3,1894.15 1807.4,1894.15 1807.4,1895.68 1809.5,1895.68 1809.5,1895.6 1811.6,1895.6 1811.6,1895.58 1813.7,1895.58 1813.7,1896.84 1815.8,1896.84 1815.8,1896.96 1817.9,1896.96 1817.9,1896.83 1820,1896.83 1820,1895.43 1822.1,1895.43 1822.1,1893.55 1824.2,1893.55 1824.2,1893.77 1826.3,1893.77 1826.3,1891.39 1828.4,1891.39 1828.4,1891.8 1830.5,1891.8 1830.5,1893.48 1832.6,1893.48 1832.6,1894.19 1834.7,1894.19 1834.7,1895.79 1836.8,1895.79 1836.8,1896.23 1838.9,1896.23 1838.9,1896.43 1841,1896.43 1841,1896.77 1843.1,1896.77 1843.1,1896.42 1845.2,1896.42 1845.2,1896.75 1847.3,1896.75 1847.3,1897 1849.4,1897 1849.4,1897.67 1851.5,1897.67 1851.5,1897.9 1853.6,1897.9 1853.6,1898.14 1855.7,1898.14 1855.7,1897.68 1857.8,1897.68 1857.8,1897.21 1859.9,1897.21 1859.9,1896.9 1862,1896.9 1862,1897.39 1864.1,1897.39 1864.1,1897.15 1866.2,1897.15 1866.2,1895.8 1868.3,1895.8 1868.3,1896.09 1870.4,1896.09 1870.4,1895.35 1872.5,1895.35 1872.5,1895.68 1874.6,1895.68 1874.6,1895.16 1876.7,1895.16 1876.7,1894.76 1878.8,1894.76 1878.8,1894.61 1880.9,1894.61 1880.9,1893.75 1883,1893.75 1883,1893.96 1885.1,1893.96 1885.1,1891.05 1887.2,1891.05 1887.2,1889.34 1889.3,1889.34 1889.3,1890.41 1891.4,1890.41 1891.4,1888.61 1893.5,1888.61 1893.5,1887.37 1895.6,1887.37 1895.6,1888.55 1897.7,1888.55 1897.7,1889.26 1899.8,1889.26 1899.8,1889.27 1901.9,1889.27 1901.9,1887.74 1904,1887.74 1904,1889.65 1906.1,1889.65 1906.1,1885.89 1908.2,1885.89 1908.2,1886.76 1910.3,1886.76 1910.3,1887.65 1912.4,1887.65 1912.4,1887.57 1914.5,1887.57 1914.5,1888.92 1916.6,1888.92 1916.6,1890.17 1918.7,1890.17 1918.7,1889.99 1920.8,1889.99 1920.8,1891.87 1922.9,1891.87 1922.9,1892.69 1925,1892.69 1925,1895.08 1927.1,1895.08 1927.1,1897.33 1929.2,1897.33 1929.2,1896.47 1931.3,1896.47 1931.3,1896.44 1933.4,1896.44 1933.4,1896.19 1935.5,1896.19 1935.5,1895.93 1937.6,1895.93 1937.6,1896.24 1939.7,1896.24 1939.7,1895.38 1941.8,1895.38 1941.8,1895.19 1943.9,1895.19 1943.9,1895.24 1946,1895.24 1946,1894.92 1948.1,1894.92 1948.1,1893.5 1950.2,1893.5 1950.2,1890.43 1952.3,1890.43 1952.3,1885.19 1954.4,1885.19 1954.4,1888 1956.5,1888 1956.5,1887.18 1958.6,1887.18 1958.6,1887.07 1960.7,1887.07 1960.7,1889.46 1962.8,1889.46 1962.8,1888.45 1964.9,1888.45 1964.9,1887.8 1967,1887.8 1967,1888.33 1969.1,1888.33 1969.1,1890.2 1971.2,1890.2 1971.2,1888.16 1973.3,1888.16 1973.3,1889.59 1975.4,1889.59 1975.4,1891.09 1977.5,1891.09 1977.5,1890.55 1979.6,1890.55 1979.6,1891.27 1981.7,1891.27 1981.7,1891.83 1983.8,1891.83 1983.8,1892.38 1985.9,1892.38 1985.9,1888.03 1988,1888.03 1988,1886.8 1990.1,1886.8 1990.1,1885.79 1992.2,1885.79 1992.2,1885.74 1994.3,1885.74 1994.3,1885.01 1996.4,1885.01 1996.4,1889.3 1998.5,1889.3 1998.5,1886.98 2000.6,1886.98 2000.6,1886.68 2002.7,1886.68 2002.7,1888.84 2004.8,1888.84 2004.8,1888.44 2006.9,1888.44 2006.9,1890.01 2009,1890.01 2009,1889.62 2011.1,1889.62 2011.1,1888.59 2013.2,1888.59 2013.2,1889.29 2015.3,1889.29 2015.3,1888.23 2017.4,1888.23 2017.4,1884.89 2019.5,1884.89 2019.5,1885.99 2021.6,1885.99 2021.6,1885.72 2023.7,1885.72 2023.7,1885.58 2025.8,1885.58 2025.8,1890.17 2027.9,1890.17 2027.9,1892.14 2030,1892.14 2030,1895.94 2032.1,1895.94 2032.1,1895.93 2034.2,1895.93 2034.2,1896.97 2036.3,1896.97 2036.3,1896.52 2038.4,1896.52 2038.4,1896.5 2040.5,1896.5 2040.5,1897.4 2042.6,1897.4 2042.6,1896.68 2044.7,1896.68 2044.7,1889.53 2046.8,1889.53 2046.8,1879.1 2048.9,1879.1 2048.9,1881.35 2051,1881.35 2051,1879.21 2053.1,1879.21 2053.1,1878.55 2055.2,1878.55 2055.2,1882.48 2057.3,1882.48 2057.3,1876.57 2059.4,1876.57 2059.4,1880.27 2061.5,1880.27 2061.5,1879.83 2063.6,1879.83 2063.6,1880.06 2065.7,1880.06 2065.7,1882.21 2067.8,1882.21 2067.8,1883.34 2069.9,1883.34 2069.9,1881.85 2072,1881.85 2072,1883.09 2074.1,1883.09 2074.1,1885.25 2076.2,1885.25 2076.2,1883.69 2078.3,1883.69 2078.3,1886.46 2080.4,1886.46 2080.4,1888.4 2082.5,1888.4 2082.5,1888.25 2084.6,1888.25 2084.6,1890.33 2086.7,1890.33 2086.7,1891.16 2088.8,1891.16 2088.8,1890.73 2090.9,1890.73 2090.9,1893.14 2093,1893.14 2093,1893.56 2095.1,1893.56 2095.1,1895.4 2097.2,1895.4 2097.2,1897.41 2099.3,1897.41 2099.3,1891.91 2101.4,1891.91 2101.4,1887.53 2103.5,1887.53 2103.5,1887.33 2105.6,1887.33 2105.6,1879.86 2107.7,1879.86 2107.7,1881.4 2109.8,1881.4 2109.8,1879.8 2111.9,1879.8 2111.9,1874.93 2114,1874.93 2114,1880.89 2116.1,1880.89 2116.1,1880.71 2118.2,1880.71 2118.2,1880.08 2120.3,1880.08 2120.3,1883.21 2122.4,1883.21 2122.4,1886.28 2124.5,1886.28 2124.5,1886.7 2126.6,1886.7 2126.6,1890.2 2128.7,1890.2 2128.7,1893.52 2130.8,1893.52 2130.8,1896.61 2132.9,1896.61 2132.9,1895.25 2135,1895.25 2135,1894.85 2137.1,1894.85 2137.1,1894.69 2139.2,1894.69 2139.2,1894.41 2141.3,1894.41 2141.3,1892.7 2143.4,1892.7 2143.4,1893.08 2145.5,1893.08 2145.5,1891.59 2147.6,1891.59 2147.6,1890.24 2149.7,1890.24 2149.7,1890.18 2151.8,1890.18 2151.8,1890.1 2153.9,1890.1 2153.9,1888.15 2156,1888.15 2156,1888.02 2158.1,1888.02 2158.1,1885.69 2160.2,1885.69 2160.2,1886.48 2162.3,1886.48 2162.3,1884.51 2164.4,1884.51 2164.4,1884.82 2166.5,1884.82 2166.5,1885.88 2168.6,1885.88 2168.6,1888.14 2170.7,1888.14 2170.7,1888.76 2172.8,1888.76 2172.8,1885.53 2174.9,1885.53 2174.9,1886.09 2177,1886.09 2177,1886.87 2179.1,1886.87 2179.1,1888.08 2181.2,1888.08 2181.2,1889.01 2183.3,1889.01 2183.3,1888.22 2185.4,1888.22 2185.4,1889.48 2187.5,1889.48 2187.5,1890.22 2189.6,1890.22 2189.6,1890.92 2191.7,1890.92 2191.7,1891.44 2193.8,1891.44 2193.8,1893.65 2195.9,1893.65 2195.9,1894.24 2198,1894.24 2198,1893.64 2200.1,1893.64 2200.1,1894.43 2202.2,1894.43 2202.2,1893.81 2204.3,1893.81 2204.3,1894.83 2206.4,1894.83 2206.4,1894.27 2208.5,1894.27 2208.5,1893.24 2210.6,1893.24 2210.6,1892.28 2212.7,1892.28 2212.7,1891.12 2214.8,1891.12 2214.8,1892.08 2216.9,1892.08 2216.9,1890.12 2219,1890.12 2219,1891.13 2221.1,1891.13 2221.1,1890.56 2223.2,1890.56 2223.2,1887.76 2225.3,1887.76 2225.3,1887.63 2227.4,1887.63 2227.4,1886.67 2229.5,1886.67 2229.5,1887.19 2231.6,1887.19 2231.6,1886.11 2233.7,1886.11 2233.7,1886.81 2235.8,1886.81 2235.8,1885.59 2237.9,1885.59 2237.9,1882.9 2240,1882.9 2240,1881.73 2242.1,1881.73 2242.1,1885.39 2244.2,1885.39 2244.2,1884.91 2246.3,1884.91 2246.3,1880.94 2248.4,1880.94 2248.4,1882.01 2250.5,1882.01 2250.5,1883.79 2252.6,1883.79 2252.6,1895.66 2254.7,1895.66 2254.7,1897.19 2256.8,1897.19 2256.8,1897.35 2258.9,1897.35 2258.9,1896.82 2261,1896.82 2261,1897.25 2263.1,1897.25 2263.1,1896.97 2265.2,1896.97 2265.2,1896.65 2267.3,1896.65 2267.3,1897.29 2269.4,1897.29 2269.4,1897.07 2271.5,1897.07 2271.5,1895.46 2273.6,1895.46 2273.6,1888.89 2275.7,1888.89 2275.7,1886.85 2277.8,1886.85 2277.8,1887.02 2279.9,1887.02 2279.9,1888.17 2282,1888.17 2282,1884.52 2284.1,1884.52 2284.1,1888.09 2286.2,1888.09 2286.2,1887.99 2288.3,1887.99 2288.3,1885.65 2290.4,1885.65 2290.4,1885.93 2292.5,1885.93 2292.5,1884.88 2294.6,1884.88 2294.6,1886.63 2296.7,1886.63 2296.7,1886.11 2298.8,1886.11 2298.8,1893.41 2300.9,1893.41 2300.9,1895.66 2303,1895.66 2303,1894.94 2305.1,1894.94 2305.1,1895.87 2307.2,1895.87 2307.2,1895.51 2309.3,1895.51 2309.3,1894.84 2311.4,1894.84 2311.4,1894.89 2313.5,1894.89 2313.5,1895.55 2315.6,1895.55 2315.6,1895.77 2317.7,1895.77 2317.7,1895.43 2319.8,1895.43 2319.8,1894.84 2321.9,1894.84 2321.9,1895.41 2324,1895.41 2324,1895.81 2326.1,1895.81 2326.1,1894.87 2328.2,1894.87 2328.2,1895.09 2330.3,1895.09 2330.3,1894.53 2332.4,1894.53 2332.4,1894.5 2334.5,1894.5 2334.5,1894.54 2336.6,1894.54 2336.6,1895.3 2338.7,1895.3 2338.7,1894.72 2340.8,1894.72 2340.8,1892.28 2342.9,1892.28 2342.9,1888.46 2345,1888.46 2345,1887.85 2347.1,1887.85 2347.1,1885.5 2349.2,1885.5 2349.2,1885.56 2351.3,1885.56 2351.3,1888.22 2353.4,1888.22 2353.4,1887.64 2355.5,1887.64 2355.5,1887.53 2357.6,1887.53 2357.6,1887.45 2359.7,1887.45 2359.7,1887.22 2361.8,1887.22 2361.8,1887.16 2363.9,1887.16 2363.9,1887.93 2366,1887.93 2366,1883.33 2368.1,1883.33 2368.1,1878.9 2370.2,1878.9 2370.2,1880.54 2372.3,1880.54 2372.3,1878.65 2374.4,1878.65 2374.4,1880.4 2376.5,1880.4 2376.5,1882.87 2378.6,1882.87 2378.6,1879.14 2380.7,1879.14 2380.7,1878.36 2382.8,1878.36 2382.8,1882.2 2384.9,1882.2 2384.9,1883.86 2387,1883.86 2387,1883.92 2389.1,1883.92 2389.1,1890.26 2391.2,1890.26 2391.2,1890.18 2393.3,1890.18 2393.3,1888.91 2395.4,1888.91 2395.4,1889.92 2397.5,1889.92 2397.5,1889.43 2399.6,1889.43 2399.6,1891.8 2401.7,1891.8 2401.7,1890.25 2403.8,1890.25 2403.8,1889.48 2405.9,1889.48 2405.9,1891.73 2408,1891.73 2408,1891.74 2408,1891.74 2408,1900" fill="#d0d0d0" />
<polygon points="921,1951 921,1950 923.1,1950 923.1,1950 925.2,1950 925.2,1950 927.3,1950 927.3,1950 929.4,1950 929.4,1950 931.5,1950 931.5,1950 933.6,1950 933.6,1949.79 935.7,1949.79 935.7,1949.54 937.8,1949.54 937.8,1949.25 939.9,1949.25 939.9,1949.45 942,1949.45 942,1949.14 944.1,1949.14 944.1,1949.12 946.2,1949.12 946.2,1948.38 948.3,1948.38 948.3,1948.26 950.4,1948.26 950.4,1948.65 952.5,1948.65 952.5,1946.3 954.6,1946.3 954.6,1943.16 956.7,1943.16 956.7,1940.99 958.8,1940.99 958.8,1940.5 960.9,1940.5 960.9,1941.59 963,1941.59 963,1941.65 965.1,1941.65 965.1,1939.6 967.2,1939.6 967.2,1942.03 969.3,1942.03 969.3,1942.27 971.4,1942.27 971.4,1942.82 973.5,1942.82 973.5,1943.42 975.6,1943.42 975.6,1941.54 977.7,1941.54 977.7,1941.04 979.8,1941.04 979.8,1939.02 981.9,1939.02 981.9,1939.59 984,1939.59 984,1939.88 986.1,1939.88 986.1,1941.68 988.2,1941.68 988.2,1942.54 990.3,1942.54 990.3,1944.38 992.4,1944.38 992.4,1945.74 994.5,1945.74 994.5,1945.6 996.6,1945.6 996.6,1946.81 998.7,1946.81 998.7,1947.79 1000.8,1947.79 1000.8,1947.92 1002.9,1947.92 1002.9,1948.3 1005,1948.3 1005,1948.38 1007.1,1948.38 1007.1,1948.32 1009.2,1948.32 1009.2,1948.53 1011.3,1948.53 1011.3,1947.86 1013.4,1947.86 1013.4,1948.22 1015.5,1948.22 1015.5,1947.79 1017.6,1947.79 1017.6,1948.23 1019.7,1948.23 1019.7,1947.68 1021.8,1947.68 1021.8,1947.79 1023.9,1947.79 1023.9,1948.6 1026,1948.6 1026,1948.4 1028.1,1948.4 1028.1,1947.73 1030.2,1947.73 1030.2,1948.15 1032.3,1948.15 1032.3,1947.66 1034.4,1947.66 1034.4,1948.22 1036.5,1948.22 1036.5,1948.53 1038.6,1948.53 1038.6,1948 1040.7,1948 1040.7,1947.85 1042.8,1947.85 1042.8,1948.34 1044.9,1948.34 1044.9,1948.34 1047,1948.34 1047,1947.1 1049.1,1947.1 1049.1,1945.03 1051.2,1945.03 1051.2,1944.25 1053.3,1944.25 1053.3,1945.6 1055.4,1945.6 1055.4,1946.29 1057.5,1946.29 1057.5,1947.45 1059.6,1947.45 1059.6,1948.39 1061.7,1948.39 1061.7,1947.6 1063.8,1947.6 1063.8,1948 1065.9,1948 1065.9,1947.31 1068,1947.31 1068,1947.19 1070.1,1947.19 1070.1,1947.29 1072.2,1947.29 1072.2,1946.26 1074.3,1946.26 1074.3,1946.91 1076.4,1946.91 1076.4,1945.41 1078.5,1945.41 1078.5,1945.32 1080.6,1945.32 1080.6,1943.52 1082.7,1943.52 1082.7,1945.82 1084.8,1945.82 1084.8,1947.52 1086.9,1947.52 1086.9,1947.63 1089,1947.63 1089,1947.73 1091.1,1947.73 1091.1,1948.18 1093.2,1948.18 1093.2,1947.53 1095.3,1947.53 1095.3,1948.17 1097.4,1948.17 1097.4,1947.92 1099.5,1947.92 1099.5,1947.37 1101.6,1947.37 1101.6,1947.54 1103.7,1947.54 1103.7,1948.09 1105.8,1948.09 1105.8,1947.03 1107.9,1947.03 1107.9,1947.86 1110,1947.86 1110,1947.76 1112.1,1947.76 1112.1,1947.09 1114.2,1947.09 1114.2,1947.57 1116.3,1947.57 1116.3,1947.56 1118.4,1947.56 1118.4,1947.79 1120.5,1947.79 1120.5,1947.72 1122.6,1947.72 1122.6,1946.5 1124.7,1946.5 1124.7,1945.57 1126.8,1945.57 1126.8,1943.24 1128.9,1943.24 1128.9,1944.53 1131,1944.53 1131,1945.37 1133.1,1945.37 1133.1,1945.61 1135.2,1945.61 1135.2,1947.19 1137.3,1947.19 1137.3,1947.12 1139.4,1947.12 1139.4,1946.8 1141.5,1946.8 1141.5,1947.7 1143.6,1947.7 1143.6,1947.77 1145.7,1947.77 1145.7,1946.91 1147.8,1946.91 1147.8,1947.07 1149.9,1947.07 1149.9,1947.78 1152,1947.78 1152,1947.9 1154.1,1947.9 1154.1,1947.31 1156.2,1947.31 1156.2,1947.13 1158.3,1947.13 1158.3,1948.01 1160.4,1948.01 1160.4,1947.23 1162.5,1947.23 1162.5,1947.35 1164.6,1947.35 1164.6,1947.7 1166.7,1947.7 1166.7,1947.94 1168.8,1947.94 1168.8,1948.31 1170.9,1948.31 1170.9,1948.42 1173,1948.42 1173,1947.53 1175.1,1947.53 1175.1,1948.3 1177.2,1948.3 1177.2,1947.89 1179.3,1947.89 1179.3,1948.01 1181.4,1948.01 1181.4,1946.1 1183.5,1946.1 1183.5,1945.23 1185.6,1945.23 1185.6,1946.57 1187.7,1946.57 1187.7,1947.81 1189.8,1947.81 1189.8,1947.91 1191.9,1947.91 1191.9,1948.55 1194,1948.55 1194,1948.41 1196.1,1948.41 1196.1,1948.1 1198.2,1948.1 1198.2,1947.84 1200.3,1947.84 1200.3,1948.07 1202.4,1948.07 1202.4,1948.4 1204.5,1948.4 1204.5,1947.82 1206.6,1947.82 1206.6,1948.49 1208.7,1948.49 1208.7,1948.67 1210.8,1948.67 1210.8,1948.45 1212.9,1948.45 1212.9,1948.3 1215,1948.3 1215,1948.66 1217.1,1948.66 1217.1,1948.57 1219.2,1948.57 1219.2,1948.4 1221.3,1948.4 1221.3,1948.23 1223.4,1948.23 1223.4,1948.64 1225.5,1948.64 1225.5,1948.44 1227.6,1948.44 1227.6,1947.98 1229.7,1947.98 1229.7,1947.92 1231.8,1947.92 1231.8,1948.22 1233.9,1948.22 1233.9,1948.2 1236,1948.2 1236,1948.3 1238.1,1948.3 1238.1,1948.7 1240.2,1948.7 1240.2,1948.8 1242.3,1948.8 1242.3,1948.83 1244.4,1948.83 1244.4,1948.07 1246.5,1948.07 1246.5,1948.26 1248.6,1948.26 1248.6,1948.05 1250.7,1948.05 1250.7,1948.86 1252.8,1948.86 1252.8,1948.35 1254.9,1948.35 1254.9,1948.5 1257,1948.5 1257,1948.3 1259.1,1948.3 1259.1,1948.65 1261.2,1948.65 1261.2,1948.1 1263.3,1948.1 1263.3,1948.88 1265.4,1948.88 1265.4,1948.5 1267.5,1948.5 1267.5,1948.36 1269.6,1948.36 1269.6,1948.24 1271.7,1948.24 1271.7,1948.38 1273.8,1948.38 1273.8,1948.42 1275.9,1948.42 1275.9,1948.36 1278,1948.36 1278,1948.28 1280.1,1948.28 1280.1,1948.74 1282.2,1948.74 1282.2,1948.48 1284.3,1948.48 1284.3,1948.33 1286.4,1948.33 1286.4,1948.36 1288.5,1948.36 1288.5,1948.73 1290.6,1948.73 1290.6,1948.45 1292.7,1948.45 1292.7,1948.41 1294.8,1948.41 1294.8,1948.64 1296.9,1948.64 1296.9,1948.62 1299,1948.62 1299,1948.81 1301.1,1948.81 1301.1,1948.67 1303.2,1948.67 1303.2,1948.66 1305.3,1948.66 1305.3,1949.07 1307.4,1949.07 1307.4,1948.66 1309.5,1948.66 1309.5,1948.41 1311.6,1948.41 1311.6,1948.51 1313.7,1948.51 1313.7,1948.64 1315.8,1948.64 1315.8,1948.9 1317.9,1948.9 1317.9,1948.66 1320,1948.66 1320,1948.78 1322.1,1948.78 1322.1,1948.89 1324.2,1948.89 1324.2,1948.62 1326.3,1948.62 1326.3,1949.17 1328.4,1949.17 1328.4,1948.71 1330.5,1948.71 1330.5,1949.22 1332.6,1949.22 1332.6,1948.84 1334.7,1948.84 1334.7,1948.93 1336.8,1948.93 1336.8,1949.12 1338.9,1949.12 1338.9,1948.8 1341,1948.8 1341,1948.95 1343.1,1948.95 1343.1,1948.89 1345.2,1948.89 1345.2,1948.69 1347.3,1948.69 1347.3,1949.15 1349.4,1949.15 1349.4,1949.32 1351.5,1949.32 1351.5,1949.14 1353.6,1949.14 1353.6,1948.9 1355.7,1948.9 1355.7,1949.23 1357.8,1949.23 1357.8,1949.26 1359.9,1949.26 1359.9,1948.79 1362,1948.79 1362,1948.96 1364.1,1948.96 1364.1,1949.12 1366.2,1949.12 1366.2,1948.83 1368.3,1948.83 1368.3,1949.19 1370.4,1949.19 1370.4,1948.97 1372.5,1948.97 1372.5,1949.27 1374.6,1949.27 1374.6,1949.12 1376.7,1949.12 1376.7,1948.88 1378.8,1948.88 1378.8,1948.81 1380.9,1948.81 1380.9,1948.84 1383,1948.84 1383,1949.15 1385.1,1949.15 1385.1,1949.03 1387.2,1949.03 1387.2,1949.2 1389.3,1949.2 1389.3,1949.31 1391.4,1949.31 1391.4,1949.08 1393.5,1949.08 1393.5,1948.86 1395.6,1948.86 1395.6,1948.86 1397.7,1948.86 1397.7,1948.94 1399.8,1948.94 1399.8,1948.79 1401.9,1948.79 1401.9,1949.22 1404,1949.22 1404,1949.29 1406.1,1949.29 1406.1,1949.11 1408.2,1949.11 1408.2,1949.22 1410.3,1949.22 1410.3,1949.26 1412.4,1949.26 1412.4,1949.14 1414.5,1949.14 1414.5,1949 1416.6,1949 1416.6,1949.08 1418.7,1949.08 1418.7,1949.2 1420.8,1949.2 1420.8,1948.86 1422.9,1948.86 1422.9,1948.77 1425,1948.77 1425,1949.11 1427.1,1949.11 1427.1,1949.35 1429.2,1949.35 1429.2,1949.38 1431.3,1949.38 1431.3,1948.84 1433.4,1948.84 1433.4,1949.37 1435.5,1949.37 1435.5,1948.95 1437.6,1948.95 1437.6,1949.4 1439.7,1949.4 1439.7,1950 1441.8,1950 1441.8,1950 1443.9,1950 1443.9,1941.79 1446,1941.79 1446,1938.93 1448.1,1938.93 1448.1,1937.08 1450.2,1937.08 1450.2,1938.78 1452.3,1938.78 1452.3,1934.45 1454.4,1934.45 1454.4,1937.03 1456.5,1937.03 1456.5,1936.74 1458.6,1936.74 1458.6,1936.42 1460.7,1936.42 1460.7,1932.07 1462.8,1932.07 1462.8,1932.21 1464.9,1932.21 1464.9,1930.02 1467,1930.02 1467,1929.71 1469.1,1929.71 1469.1,1928.59 1471.2,1928.59 1471.2,1927.46 1473.3,1927.46 1473.3,1929.24 1475.4,1929.24 1475.4,1932.47 1477.5,1932.47 1477.5,1930.5 1479.6,1930.5 1479.6,1932.46 1481.7,1932.46 1481.7,1933.55 1483.8,1933.55 1483.8,1930.26 1485.9,1930.26 1485.9,1928.48 1488,1928.48 1488,1932.15 1490.1,1932.15 1490.1,1932.77 1492.2,1932.77 1492.2,1933.76 1494.3,1933.76 1494.3,1933.3 1496.4,1933.3 1496.4,1935.85 1498.5,1935.85 1498.5,1937 1500.6,1937 1500.6,1938.39 1502.7,1938.39 1502.7,1941.61 1504.8,1941.61 1504.8,1942.37 1506.9,1942.37 1506.9,1944.2 1509,1944.2 1509,1947.45 1511.1,1947.45 1511.1,1948.44 1513.2,1948.44 1513.2,1948.94 1515.3,1948.94 1515.3,1949.32 1517.4,1949.32 1517.4,1949.11 1519.5,1949.11 1519.5,1949 1521.6,1949 1521.6,1948.82 1523.7,1948.82 1523.7,1949.16 1525.8,1949.16 1525.8,1949.04 1527.9,1949.04 1527.9,1948.84 1530,1948.84 1530,1948.89 1532.1,1948.89 1532.1,1948.8 1534.2,1948.8 1534.2,1949.1 1536.3,1949.1 1536.3,1948.98 1538.4,1948.98 1538.4,1949.27 1540.5,1949.27 1540.5,1948.94 1542.6,1948.94 1542.6,1948.88 1544.7,1948.88 1544.7,1948.99 1546.8,1948.99 1546.8,1948.94 1548.9,1948.94 1548.9,1949.26 1551,1949.26 1551,1948.82 1553.1,1948.82 1553.1,1948.77 1555.2,1948.77 1555.2,1948.77 1557.3,1948.77 1557.3,1949.06 1559.4,1949.06 1559.4,1948.89 1561.5,1948.89 1561.5,1947.4 1563.6,1947.4 1563.6,1942.21 1565.7,1942.21 1565.7,1938.07 1567.8,1938.07 1567.8,1938.79 1569.9,1938.79 1569.9,1938.8 1572,1938.8 1572,1935.84 1574.1,1935.84 1574.1,1935.41 1576.2,1935.41 1576.2,1937.42 1578.3,1937.42 1578.3,1941.44 1580.4,1941.44 1580.4,1945.32 1582.5,1945.32 1582.5,1944.36 1584.6,1944.36 1584.6,1945.52 1586.7,1945.52 1586.7,1943.52 1588.8,1943.52 1588.8,1944.59 1590.9,1944.59 1590.9,1943.84 1593,1943.84 1593,1940.88 1595.1,1940.88 1595.1,1941.04 1597.2,1941.04 1597.2,1939.17 1599.3,1939.17 1599.3,1935.5 1601.4,1935.5 1601.4,1933.45 1603.5,1933.45 1603.5,1931.79 1605.6,1931.79 1605.6,1931.68 1607.7,1931.68 1607.7,1929.07 1609.8,1929.07 1609.8,1932.15 1611.9,1932.15 1611.9,1929.66 1614,1929.66 1614,1935.29 1616.1,1935.29 1616.1,1934.78 1618.2,1934.78 1618.2,1933.3 1620.3,1933.3 1620.3,1935.94 1622.4,1935.94 1622.4,1938.62 1624.5,1938.62 1624.5,1943.87 1626.6,1943.87 1626.6,1944.89 1628.7,1944.89 1628.7,1943.81 1630.8,1943.81 1630.8,1944.02 1632.9,1944.02 1632.9,1944.22 1635,1944.22 1635,1943.68 1637.1,1943.68 1637.1,1936.01 1639.2,1936.01 1639.2,1929.2 1641.3,1929.2 1641.3,1933.46 1643.4,1933.46 1643.4,1929.06 1645.5,1929.06 1645.5,1928.06 1647.6,1928.06 1647.6,1930.79 1649.7,1930.79 1649.7,1930.25 1651.8,1930.25 1651.8,1932.58 1653.9,1932.58 1653.9,1930.08 1656,1930.08 1656,1930.1 1658.1,1930.1 1658.1,1929.18 1660.2,1929.18 1660.2,1933.65 1662.3,1933.65 1662.3,1927.93 1664.4,1927.93 1664.4,1931.6 1666.5,1931.6 1666.5,1932.97 1668.6,1932.97 1668.6,1931.2 1670.7,1931.2 1670.7,1933.3 1672.8,1933.3 1672.8,1934.36 1674.9,1934.36 1674.9,1933.82 1677,1933.82 1677,1937.52 1679.1,1937.52 1679.1,1935.43 1681.2,1935.43 1681.2,1936.45 1683.3,1936.45 1683.3,1934.19 1685.4,1934.19 1685.4,1934.8 1687.5,1934.8 1687.5,1938.25 1689.6,1938.25 1689.6,1937.7 1691.7,1937.7 1691.7,1939.59 1693.8,1939.59 1693.8,1938.64 1695.9,1938.64 1695.9,1937.27 1698,1937.27 1698,1937.03 1700.1,1937.03 1700.1,1938.87 1702.2,1938.87 1702.2,1939.61 1704.3,1939.61 1704.3,1940.21 1706.4,1940.21 1706.4,1938.6 1708.5,1938.6 1708.5,1937.49 1710.6,1937.49 1710.6,1940.71 1712.7,1940.71 1712.7,1938.28 1714.8,1938.28 1714.8,1941.29 1716.9,1941.29 1716.9,1943.1 1719,1943.1 1719,1946.2 1721.1,1946.2 1721.1,1947.28 1723.2,1947.28 1723.2,1945.87 1725.3,1945.87 1725.3,1943.95 1727.4,1943.95 1727.4,1943.36 1729.5,1943.36 1729.5,1944.96 1731.6,1944.96 1731.6,1943.93 1733.7,1943.93 1733.7,1945.6 1735.8,1945.6 1735.8,1945.2 1737.9,1945.2 1737.9,1946.06 1740,1946.06 1740,1946.5 1742.1,1946.5 1742.1,1946.34 1744.2,1946.34 1744.2,1946.87 1746.3,1946.87 1746.3,1947.27 1748.4,1947.27 1748.4,1945.7 1750.5,1945.7 1750.5,1943.92 1752.6,1943.92 1752.6,1943.39 1754.7,1943.39 1754.7,1941.86 1756.8,1941.86 1756.8,1938.86 1758.9,1938.86 1758.9,1937.81 1761,1937.81 1761,1937.28 1763.1,1937.28 1763.1,1934.73 1765.2,1934.73 1765.2,1934.88 1767.3,1934.88 1767.3,1933.14 1769.4,1933.14 1769.4,1938.06 1771.5,1938.06 1771.5,1937.55 1773.6,1937.55 1773.6,1939.21 1775.7,1939.21 1775.7,1940.87 1777.8,1940.87 1777.8,1944 1779.9,1944 1779.9,1944.74 1782,1944.74 1782,1944.28 1784.1,1944.28 1784.1,1946.37 1786.2,1946.37 1786.2,1945.95 1788.3,1945.95 1788.3,1946 1790.4,1946 1790.4,1945.74 1792.5,1945.74 1792.5,1944.1 1794.6,1944.1 1794.6,1941.2 1796.7,1941.2 1796.7,1942.83 1798.8,1942.83 1798.8,1944.21 1800.9,1944.21 1800.9,1943.45 1803,1943.45 1803,1945.39 1805.1,1945.39 1805.1,1945.11 1807.2,1945.11 1807.2,1946.64 1809.3,1946.64 1809.3,1946.56 1811.4,1946.56 1811.4,1946.55 1813.5,1946.55 1813.5,1947.81 1815.6,1947.81 1815.6,1947.93 1817.7,1947.93 1817.7,1947.79 1819.8,1947.79 1819.8,1946.6 1821.9,1946.6 1821.9,1944.72 1824,1944.72 1824,1944.9 1826.1,1944.9 1826.1,1942.43 1828.2,1942.43 1828.2,1942.69 1830.3,1942.69 1830.3,1944.38 1832.4,1944.38 1832.4,1945.08 1834.5,1945.08 1834.5,1946.77 1836.6,1946.77 1836.6,1947.2 1838.7,1947.2 1838.7,1947.41 1840.8,1947.41 1840.8,1947.75 1842.9,1947.75 1842.9,1947.39 1845,1947.39 1845,1947.73 1847.1,1947.73 1847.1,1947.97 1849.2,1947.97 1849.2,1948.64 1851.3,1948.64 1851.3,1948.87 1853.4,1948.87 1853.4,1949.12 1855.5,1949.12 1855.5,1948.71 1857.6,1948.71 1857.6,1948.25 1859.7,1948.25 1859.7,1947.94 1861.8,1947.94 1861.8,1948.41 1863.9,1948.41 1863.9,1948.18 1866,1948.18 1866,1946.84 1868.1,1946.84 1868.1,1947.12 1870.2,1947.12 1870.2,1946.38 1872.3,1946.38 1872.3,1946.71 1874.4,1946.71 1874.4,1946.19 1876.5,1946.19 1876.5,1945.79 1878.6,1945.79 1878.6,1945.63 1880.7,1945.63 1880.7,1944.87 1882.8,1944.87 1882.8,1945.05 1884.9,1945.05 1884.9,1942.17 1887,1942.17 1887,1940.47 1889.1,1940.47 1889.1,1941.51 1891.2,1941.51 1891.2,1939.63 1893.3,1939.63 1893.3,1938.39 1895.4,1938.39 1895.4,1939.56 1897.5,1939.56 1897.5,1940.27 1899.6,1940.27 1899.6,1940.28 1901.7,1940.28 1901.7,1938.75 1903.8,1938.75 1903.8,1940.66 1905.9,1940.66 1905.9,1936.9 1908,1936.9 1908,1937.71 1910.1,1937.71 1910.1,1938.6 1912.2,1938.6 1912.2,1938.52 1914.3,1938.52 1914.3,1939.87 1916.4,1939.87 1916.4,1941.12 1918.5,1941.12 1918.5,1940.94 1920.6,1940.94 1920.6,1942.7 1922.7,1942.7 1922.7,1943.49 1924.8,1943.49 1924.8,1945.88 1926.9,1945.88 1926.9,1948.35 1929,1948.35 1929,1947.5 1931.1,1947.5 1931.1,1947.46 1933.2,1947.46 1933.2,1947.21 1935.3,1947.21 1935.3,1946.95 1937.4,1946.95 1937.4,1947.26 1939.5,1947.26 1939.5,1946.41 1941.6,1946.41 1941.6,1946.21 1943.7,1946.21 1943.7,1946.26 1945.8,1946.26 1945.8,1945.94 1947.9,1945.94 1947.9,1944.91 1950,1944.91 1950,1941.79 1952.1,1941.79 1952.1,1936.59 1954.2,1936.59 1954.2,1938.96 1956.3,1938.96 1956.3,1938.14 1958.4,1938.14 1958.4,1938.02 1960.5,1938.02 1960.5,1940.42 1962.6,1940.42 1962.6,1939.41 1964.7,1939.41 1964.7,1938.75 1966.8,1938.75 1966.8,1939.28 1968.9,1939.28 1968.9,1941.16 1971,1941.16 1971,1939.11 1973.1,1939.11 1973.1,1940.54 1975.2,1940.54 1975.2,1942.05 1977.3,1942.05 1977.3,1941.5 1979.4,1941.5 1979.4,1942.23 1981.5,1942.23 1981.5,1942.79 1983.6,1942.79 1983.6,1943.59 1985.7,1943.59 1985.7,1939.29 1987.8,1939.29 1987.8,1938.03 1989.9,1938.03 1989.9,1936.77 1992,1936.77 1992,1936.72 1994.1,1936.72 1994.1,1935.99 1996.2,1935.99 1996.2,1940.28 1998.3,1940.28 1998.3,1937.97 2000.4,1937.97 2000.4,1937.66 2002.5,1937.66 2002.5,1939.83 2004.6,1939.83 2004.6,1939.43 2006.7,1939.43 2006.7,1940.99 2008.8,1940.99 2008.8,1940.6 2010.9,1940.6 2010.9,1939.63 2013,1939.63 2013,1940.32 2015.1,1940.32 2015.1,1939.27 2017.2,1939.27 2017.2,1935.94 2019.3,1935.94 2019.3,1937.04 2021.4,1937.04 2021.4,1936.76 2023.5,1936.76 2023.5,1936.26 2025.6,1936.26 2025.6,1940.89 2027.7,1940.89 2027.7,1942.82 2029.8,1942.82 2029.8,1946.65 2031.9,1946.65 2031.9,1946.92 2034,1946.92 2034,1947.96 2036.1,1947.96 2036.1,1947.5 2038.2,1947.5 2038.2,1947.49 2040.3,1947.49 2040.3,1948.39 2042.4,1948.39 2042.4,1947.66 2044.5,1947.66 2044.5,1941.42 2046.6,1941.42 2046.6,1930.08 2048.7,1930.08 2048.7,1932.34 2050.8,1932.34 2050.8,1930.19 2052.9,1930.19 2052.9,1929.54 2055,1929.54 2055,1933.47 2057.1,1933.47 2057.1,1927.55 2059.2,1927.55 2059.2,1931.26 2061.3,1931.26 2061.3,1930.76 2063.4,1930.76 2063.4,1930.99 2065.5,1930.99 2065.5,1933.15 2067.6,1933.15 2067.6,1934.28 2069.7,1934.28 2069.7,1932.78 2071.8,1932.78 2071.8,1934.02 2073.9,1934.02 2073.9,1936.19 2076,1936.19 2076,1934.62 2078.1,1934.62 2078.1,1937.4 2080.2,1937.4 2080.2,1939.35 2082.3,1939.35 2082.3,1939.12 2084.4,1939.12 2084.4,1941.21 2086.5,1941.21 2086.5,1942.04 2088.6,1942.04 2088.6,1941.58 2090.7,1941.58 2090.7,1944.01 2092.8,1944.01 2092.8,1944.41 2094.9,1944.41 2094.9,1946.25 2097,1946.25 2097,1948.49 2099.1,1948.49 2099.1,1943.35 2101.2,1943.35 2101.2,1938.96 2103.3,1938.96 2103.3,1938.65 2105.4,1938.65 2105.4,1931 2107.5,1931 2107.5,1932.52 2109.6,1932.52 2109.6,1930.93 2111.7,1930.93 2111.7,1926.08 2113.8,1926.08 2113.8,1931.73 2115.9,1931.73 2115.9,1931.54 2118,1931.54 2118,1930.89 2120.1,1930.89 2120.1,1934.03 2122.2,1934.03 2122.2,1937.11 2124.3,1937.11 2124.3,1937.41 2126.4,1937.41 2126.4,1940.93 2128.5,1940.93 2128.5,1944.27 2130.6,1944.27 2130.6,1947.6 2132.7,1947.6 2132.7,1946.32 2134.8,1946.32 2134.8,1945.91 2136.9,1945.91 2136.9,1945.74 2139,1945.74 2139,1945.47 2141.1,1945.47 2141.1,1943.76 2143.2,1943.76 2143.2,1944.14 2145.3,1944.14 2145.3,1942.65 2147.4,1942.65 2147.4,1941.3 2149.5,1941.3 2149.5,1941.25 2151.6,1941.25 2151.6,1941.17 2153.7,1941.17 2153.7,1939.23 2155.8,1939.23 2155.8,1939.09 2157.9,1939.09 2157.9,1936.77 2160,1936.77 2160,1937.47 2162.1,1937.47 2162.1,1935.5 2164.2,1935.5 2164.2,1935.81 2166.3,1935.81 2166.3,1936.87 2168.4,1936.87 2168.4,1939.13 2170.5,1939.13 2170.5,1939.75 2172.6,1939.75 2172.6,1936.51 2174.7,1936.51 2174.7,1937.08 2176.8,1937.08 2176.8,1937.86 2178.9,1937.86 2178.9,1939.07 2181,1939.07 2181,1939.94 2183.1,1939.94 2183.1,1939.14 2185.2,1939.14 2185.2,1940.41 2187.3,1940.41 2187.3,1941.14 2189.4,1941.14 2189.4,1941.84 2191.5,1941.84 2191.5,1942.36 2193.6,1942.36 2193.6,1944.58 2195.7,1944.58 2195.7,1945.17 2197.8,1945.17 2197.8,1944.55 2199.9,1944.55 2199.9,1945.5 2202,1945.5 2202,1944.88 2204.1,1944.88 2204.1,1945.88 2206.2,1945.88 2206.2,1945.32 2208.3,1945.32 2208.3,1944.3 2210.4,1944.3 2210.4,1943.33 2212.5,1943.33 2212.5,1942.18 2214.6,1942.18 2214.6,1943.13 2216.7,1943.13 2216.7,1941.18 2218.8,1941.18 2218.8,1942.18 2220.9,1942.18 2220.9,1941.61 2223,1941.61 2223,1938.82 2225.1,1938.82 2225.1,1938.69 2227.2,1938.69 2227.2,1937.73 2229.3,1937.73 2229.3,1938.24 2231.4,1938.24 2231.4,1937.17 2233.5,1937.17 2233.5,1937.87 2235.6,1937.87 2235.6,1936.65 2237.7,1936.65 2237.7,1933.97 2239.8,1933.97 2239.8,1932.8 2241.9,1932.8 2241.9,1936.44 2244,1936.44 2244,1935.91 2246.1,1935.91 2246.1,1931.94 2248.2,1931.94 2248.2,1933.01 2250.3,1933.01 2250.3,1933.74 2252.4,1933.74 2252.4,1945.79 2254.5,1945.79 2254.5,1948.19 2256.6,1948.19 2256.6,1948.35 2258.7,1948.35 2258.7,1947.82 2260.8,1947.82 2260.8,1948.25 2262.9,1948.25 2262.9,1947.97 2265,1947.97 2265,1947.65 2267.1,1947.65 2267.1,1948.29 2269.2,1948.29 2269.2,1948.07 2271.3,1948.07 2271.3,1947.03 2273.4,1947.03 2273.4,1940.49 2275.5,1940.49 2275.5,1937.86 2277.6,1937.86 2277.6,1938.03 2279.7,1938.03 2279.7,1939.18 2281.8,1939.18 2281.8,1935.53 2283.9,1935.53 2283.9,1939.1 2286,1939.1 2286,1939 2288.1,1939 2288.1,1936.66 2290.2,1936.66 2290.2,1936.94 2292.3,1936.94 2292.3,1935.89 2294.4,1935.89 2294.4,1937.63 2296.5,1937.63 2296.5,1936.59 2298.6,1936.59 2298.6,1943.99 2300.7,1943.99 2300.7,1946.66 2302.8,1946.66 2302.8,1945.94 2304.9,1945.94 2304.9,1946.87 2307,1946.87 2307,1946.51 2309.1,1946.51 2309.1,1945.84 2311.2,1945.84 2311.2,1945.89 2313.3,1945.89 2313.3,1946.55 2315.4,1946.55 2315.4,1946.77 2317.5,1946.77 2317.5,1946.43 2319.6,1946.43 2319.6,1945.84 2321.7,1945.84 2321.7,1946.41 2323.8,1946.41 2323.8,1946.81 2325.9,1946.81 2325.9,1945.87 2328,1945.87 2328,1946.09 2330.1,1946.09 2330.1,1945.53 2332.2,1945.53 2332.2,1945.5 2334.3,1945.5 2334.3,1945.54 2336.4,1945.54 2336.4,1946.3 2338.5,1946.3 2338.5,1945.72 2340.6,1945.72 2340.6,1943.64 2342.7,1943.64 2342.7,1939.82 2344.8,1939.82 2344.8,1938.86 2346.9,1938.86 2346.9,1936.51 2349,1936.51 2349,1936.57 2351.1,1936.57 2351.1,1939.23 2353.2,1939.23 2353.2,1938.65 2355.3,1938.65 2355.3,1938.54 2357.4,1938.54 2357.4,1938.46 2359.5,1938.46 2359.5,1938.23 2361.6,1938.23 2361.6,1938.17 2363.7,1938.17 2363.7,1938.94 2365.8,1938.94 2365.8,1934.63 2367.9,1934.63 2367.9,1930.06 2370,1930.06 2370,1931.54 2372.1,1931.54 2372.1,1929.65 2374.2,1929.65 2374.2,1931.4 2376.3,1931.4 2376.3,1933.87 2378.4,1933.87 2378.4,1930.14 2380.5,1930.14 2380.5,1929.36 2382.6,1929.36 2382.6,1933.2 2384.7,1933.2 2384.7,1934.86 2386.8,1934.86 2386.8,1934.27 2388.9,1934.27 2388.9,1940.93 2391,1940.93 2391,1941.18 2393.1,1941.18 2393.1,1939.91 2395.2,1939.91 2395.2,1940.92 2397.3,1940.92 2397.3,1940.43 2399.4,1940.43 2399.4,1942.8 2401.5,1942.8 2401.5,1941.25 2403.6,1941.25 2403.6,1940.48 2405.7,1940.48 2405.7,1942.73 2407.8,1942.73 2407.8,1942.74 2408,1942.74 2408,1951" fill="#d0d0d0" />
<rect x="932" y="1865.5" width="455.5" height="32.5" fill="#2fdc9b" />
<rect x="918.75" y="1865" width="13.5" height="35" fill="#166b4e" />
<rect x="948.5" y="1864" width="34" height="30" fill="#1f9e30" stroke="#8cc29a" stroke-width="2" />
<text x="952.5" y="1888.5" font-size="27" fill="#0c3a14" textLength="26" lengthAdjust="spacingAndGlyphs" font-style="italic" >fx</text>
<text x="1007.5" y="1891.3" font-size="29" fill="#0b2c20" textLength="360.5" lengthAdjust="spacingAndGlyphs" >Granular Recovery audio.mp3</text>
</g>
<rect x="917.5" y="1507.3" width="1490.5" height="2" fill="#0a0a0a" />
<rect x="917.5" y="1509" width="1490.5" height="6" fill="#ffff00" />
<rect x="1541.4" y="1506" width="2.3" height="487" fill="#2d8ceb" />
<polygon points="1525.5,1472 1559.5,1472 1559.5,1493 1542.5,1508.5 1525.5,1493" fill="#2d8ceb" />
<rect x="2409" y="1515" width="32" height="478" fill="#2a2a2a" />
<rect x="2409" y="1526" width="32" height="100" fill="#333333" rx="16" />
<rect x="2409" y="1660" width="32" height="171" fill="#333333" rx="16" />
<rect x="2409" y="1857" width="32" height="129" fill="#333333" rx="16" />
<circle cx="2425" cy="1539" r="12.5" fill="#262626" stroke="#9a9a9a" stroke-width="6" />
<circle cx="2425" cy="1613" r="12.5" fill="#262626" stroke="#9a9a9a" stroke-width="6" />
<circle cx="2425" cy="1673" r="12.5" fill="#262626" stroke="#9a9a9a" stroke-width="6" />
<circle cx="2425" cy="1818" r="12.5" fill="#262626" stroke="#9a9a9a" stroke-width="6" />
<circle cx="2425" cy="1870" r="12.5" fill="#262626" stroke="#9a9a9a" stroke-width="6" />
<circle cx="2425" cy="1972.75" r="12.5" fill="#262626" stroke="#9a9a9a" stroke-width="6" />
<rect x="235.5" y="1996.7" width="2170" height="31" fill="#1c1c1c" rx="15.5" stroke="#343434" stroke-width="1.6" />
<rect x="371" y="1996" width="282" height="32.5" fill="#333333" />
<circle cx="371" cy="2012" r="12.5" fill="#262626" stroke="#9a9a9a" stroke-width="6" />
<circle cx="652.7" cy="2012" r="12.5" fill="#262626" stroke="#9a9a9a" stroke-width="6" />
<rect x="2528.7" y="1371.7" width="135" height="596" fill="#1c1c1c" stroke="#000" stroke-width="2.6" />
<rect x="2594.7" y="1371" width="2.6" height="31" fill="#000" />
<rect x="2528" y="1400" width="136" height="2.6" fill="#000" />
<rect x="2665.5" y="1405.15" width="12" height="3.2" fill="#a8a8a8" />
<rect x="2665.5" y="1423.72" width="5.5" height="3" fill="#a8a8a8" />
<rect x="2665.5" y="1442.2" width="5.5" height="3" fill="#a8a8a8" />
<rect x="2665.5" y="1460.67" width="5.5" height="3" fill="#a8a8a8" />
<rect x="2665.5" y="1479.15" width="5.5" height="3" fill="#a8a8a8" />
<rect x="2665.5" y="1497.62" width="5.5" height="3" fill="#a8a8a8" />
<rect x="2665.5" y="1516" width="12" height="3.2" fill="#a8a8a8" />
<rect x="2665.5" y="1534.58" width="5.5" height="3" fill="#a8a8a8" />
<rect x="2665.5" y="1553.05" width="5.5" height="3" fill="#a8a8a8" />
<rect x="2665.5" y="1571.53" width="5.5" height="3" fill="#a8a8a8" />
<rect x="2665.5" y="1590" width="5.5" height="3" fill="#a8a8a8" />
<rect x="2665.5" y="1608.47" width="5.5" height="3" fill="#a8a8a8" />
<rect x="2665.5" y="1626.85" width="12" height="3.2" fill="#a8a8a8" />
<rect x="2665.5" y="1645.42" width="5.5" height="3" fill="#a8a8a8" />
<rect x="2665.5" y="1663.9" width="5.5" height="3" fill="#a8a8a8" />
<rect x="2665.5" y="1682.38" width="5.5" height="3" fill="#a8a8a8" />
<rect x="2665.5" y="1700.85" width="5.5" height="3" fill="#a8a8a8" />
<rect x="2665.5" y="1719.33" width="5.5" height="3" fill="#a8a8a8" />
<rect x="2665.5" y="1737.7" width="12" height="3.2" fill="#a8a8a8" />
<rect x="2665.5" y="1756.28" width="5.5" height="3" fill="#a8a8a8" />
<rect x="2665.5" y="1774.75" width="5.5" height="3" fill="#a8a8a8" />
<rect x="2665.5" y="1793.22" width="5.5" height="3" fill="#a8a8a8" />
<rect x="2665.5" y="1811.7" width="5.5" height="3" fill="#a8a8a8" />
<rect x="2665.5" y="1830.17" width="5.5" height="3" fill="#a8a8a8" />
<rect x="2665.5" y="1848.55" width="12" height="3.2" fill="#a8a8a8" />
<rect x="2665.5" y="1867.12" width="5.5" height="3" fill="#a8a8a8" />
<rect x="2665.5" y="1885.6" width="5.5" height="3" fill="#a8a8a8" />
<rect x="2665.5" y="1904.07" width="5.5" height="3" fill="#a8a8a8" />
<rect x="2665.5" y="1922.55" width="5.5" height="3" fill="#a8a8a8" />
<rect x="2665.5" y="1941.03" width="5.5" height="3" fill="#a8a8a8" />
<rect x="2665.5" y="1959.4" width="12" height="3.2" fill="#a8a8a8" />
<text x="2688.75" y="1417.25" font-size="30" fill="#9c9c9c" textLength="14" lengthAdjust="spacingAndGlyphs" >0</text>
<text x="2687.5" y="1528.1" font-size="30" fill="#9c9c9c" textLength="37.5" lengthAdjust="spacingAndGlyphs" >-12</text>
<text x="2687.5" y="1638.95" font-size="30" fill="#9c9c9c" textLength="37.5" lengthAdjust="spacingAndGlyphs" >-24</text>
<text x="2687.5" y="1749.8" font-size="30" fill="#9c9c9c" textLength="37.5" lengthAdjust="spacingAndGlyphs" >-36</text>
<text x="2687.5" y="1860.65" font-size="30" fill="#9c9c9c" textLength="37.5" lengthAdjust="spacingAndGlyphs" >-48</text>
<text x="2691" y="1966" font-size="30" fill="#9c9c9c" textLength="32" lengthAdjust="spacingAndGlyphs" >dB</text>
<rect x="2530" y="1959" width="65" height="4.5" fill="#f4f400" />
<rect x="2597.5" y="1959" width="64.5" height="4.5" fill="#f4f400" />
<rect x="2534.8" y="1979.8" width="52" height="52.5" fill="#1c1c1c" rx="4" stroke="#383838" stroke-width="1.6" />
<rect x="2601.8" y="1979.8" width="52" height="52.5" fill="#1c1c1c" rx="4" stroke="#383838" stroke-width="1.6" />
<text x="2552.5" y="2017" font-size="30" fill="#cfcfcf" textLength="17" lengthAdjust="spacingAndGlyphs" >S</text>
<text x="2619" y="2017" font-size="30" fill="#cfcfcf" textLength="17" lengthAdjust="spacingAndGlyphs" >S</text>
<rect x="2782.5" y="93.3" width="780.5" height="6.7" fill="#161616" />
<rect x="2782.5" y="186" width="780.5" height="6.7" fill="#161616" />
<rect x="2782.5" y="278.8" width="780.5" height="6.7" fill="#161616" />
<rect x="2782.5" y="371.8" width="780.5" height="6.7" fill="#161616" />
<rect x="2782.5" y="464.3" width="780.5" height="6.7" fill="#161616" />
<text x="2820" y="65" font-size="36" fill="#a9a9a9" textLength="56" lengthAdjust="spacingAndGlyphs" >Info</text>
<text x="2820" y="157.5" font-size="36" fill="#a9a9a9" textLength="96.5" lengthAdjust="spacingAndGlyphs" >Effects</text>
<text x="2820" y="250.5" font-size="36" fill="#a9a9a9" textLength="266" lengthAdjust="spacingAndGlyphs" >Essential Graphics</text>
<text x="2820" y="342.8" font-size="36" fill="#a9a9a9" textLength="230.5" lengthAdjust="spacingAndGlyphs" >Essential Sound</text>
<text x="2820" y="435.5" font-size="36" fill="#a9a9a9" textLength="202" lengthAdjust="spacingAndGlyphs" >Lumetri Color</text>
<text x="2820" y="528" font-size="36" fill="#dedede" textLength="119.5" lengthAdjust="spacingAndGlyphs" >Markers</text>
<rect x="3506" y="507.3" width="25.5" height="3.3" fill="#c4c4c4" />
<rect x="3506" y="516.5" width="25.5" height="3.3" fill="#c4c4c4" />
<rect x="3506" y="525.8" width="25.5" height="3.3" fill="#c4c4c4" />
<rect x="2793.5" y="569.7" width="354" height="56.5" fill="#151515" rx="5" stroke="#363636" stroke-width="1.6" />
<circle cx="2831.5" cy="593.5" r="10.3" fill="none" stroke="#d0d0d0" stroke-width="3.6" />
<line x1="2824" y1="601.5" x2="2812.5" y2="614" stroke="#d0d0d0" stroke-width="5.2" stroke-linecap="round"/>
<rect x="3172" y="578" width="53" height="52" fill="#1e1e1e" rx="7" />
<rect x="3174" y="580" width="49" height="48" fill="#728c38" rx="5" />
<rect x="3273.4" y="578" width="53" height="52" fill="#1e1e1e" rx="7" />
<rect x="3275.4" y="580" width="49" height="48" fill="#d52c3a" rx="5" />
<rect x="3374.6" y="578" width="53" height="52" fill="#1e1e1e" rx="7" />
<rect x="3376.6" y="580" width="49" height="48" fill="#b08cb6" rx="5" />
<rect x="3475.5" y="578" width="53" height="52" fill="#1e1e1e" rx="7" />
<rect x="3477.5" y="580" width="49" height="48" fill="#ec7325" rx="5" />
<rect x="2971" y="791" width="483" height="189" fill="#ffffff" />
<text x="3212.5" y="860.7" font-size="27.5" fill="#0d0d0d" textLength="436.6" lengthAdjust="spacingAndGlyphs" text-anchor="middle" >But the Markers panel is empty. I tried</text>
<text x="3212.5" y="894.5" font-size="27.5" fill="#0d0d0d" textLength="405.6" lengthAdjust="spacingAndGlyphs" text-anchor="middle" >clicking on the colors above… didn’t</text>
<text x="3212.5" y="928.2" font-size="27.5" fill="#0d0d0d" textLength="193.5" lengthAdjust="spacingAndGlyphs" text-anchor="middle" >change anything.</text>
<rect x="1050" y="1258" width="168.5" height="105" fill="#ffffff" stroke="#050505" stroke-width="2" />
<polygon points="1134,1362 1155.3,1384.5 1155.3,1362" fill="#ffffff" />
<polyline points="1134,1362 1155.3,1384.5 1155.3,1362" fill="none" stroke="#050505" stroke-width="1.6" stroke-linecap="butt" stroke-linejoin="miter"/>
<text x="1060" y="1289" font-size="22.5" fill="#0d0d0d" textLength="75.5" lengthAdjust="spacingAndGlyphs" >Chapter</text>
<text x="1060" y="1317.3" font-size="22.5" fill="#0d0d0d" textLength="113.5" lengthAdjust="spacingAndGlyphs" >Markers are</text>
<text x="1060" y="1345.3" font-size="22.5" fill="#0d0d0d" textLength="60" lengthAdjust="spacingAndGlyphs" >here…</text>
<rect x="2029" y="1258" width="167.3" height="105" fill="#ffffff" stroke="#050505" stroke-width="2" />
<polygon points="2092,1362 2092,1384 2113.5,1362" fill="#ffffff" />
<polyline points="2092,1362 2092,1384 2113.5,1362" fill="none" stroke="#050505" stroke-width="1.6" stroke-linecap="butt" stroke-linejoin="miter"/>
<text x="2039" y="1289" font-size="22.5" fill="#0d0d0d" textLength="75.5" lengthAdjust="spacingAndGlyphs" >Chapter</text>
<text x="2039" y="1317.3" font-size="22.5" fill="#0d0d0d" textLength="113.5" lengthAdjust="spacingAndGlyphs" >Markers are</text>
<text x="2039" y="1345.3" font-size="22.5" fill="#0d0d0d" textLength="60" lengthAdjust="spacingAndGlyphs" >here…</text>
</svg>
</main>
</body></html>
